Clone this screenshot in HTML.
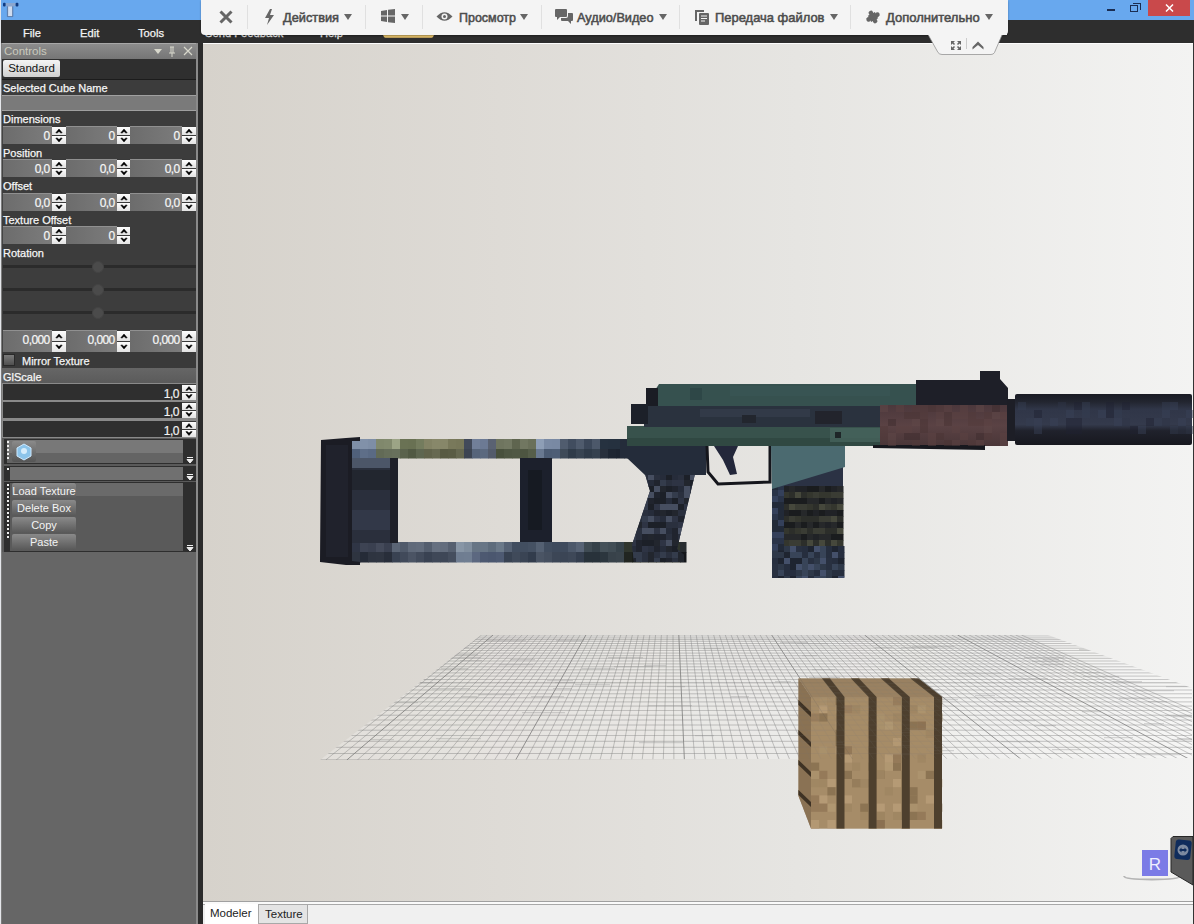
<!DOCTYPE html><html><head><meta charset="utf-8"><style>
*{margin:0;padding:0;box-sizing:border-box}
html,body{width:1194px;height:924px;overflow:hidden;background:#2d2d2d;font-family:"Liberation Sans",sans-serif}
div{position:absolute}
.mi{top:26px;color:#f4f4f4;font-size:11.2px;line-height:14px;-webkit-text-stroke:.25px #f4f4f4}
.lbl{left:2px;width:194px;background:#3c3c3c;color:#f6f6f6;font-size:11px;padding-left:1px;white-space:nowrap;-webkit-text-stroke:.25px #f6f6f6}
.fld{background:linear-gradient(90deg,#6c6c6c,#7c7c7c);border-top:1px solid #909090;color:#f6f6f6;font-size:12px;text-align:right;padding-right:2.4px;white-space:nowrap;-webkit-text-stroke:.2px #f6f6f6;letter-spacing:-.6px}
.spb{background:linear-gradient(#fdfdfd,#e2e2e2)}
.tb{font-size:13.4px;font-weight:normal;color:#4c4c4c;top:11px;line-height:14px;white-space:nowrap;-webkit-text-stroke:.55px #4c4c4c}
.sep{top:5px;width:1px;height:24px;background:#e0e0e0}
.tri{top:14px;width:0;height:0;border-left:4px solid transparent;border-right:4px solid transparent;border-top:6px solid #666}
</style></head><body>
<div style="left:0;top:0;width:1194px;height:20px;background:#68a8ee"></div>
<div style="left:0;top:20px;width:1194px;height:23px;background:#2e2e2e"></div>
<div class="mi" style="left:23px">File</div>
<div class="mi" style="left:80px">Edit</div>
<div class="mi" style="left:138px">Tools</div>
<div class="mi" style="left:205px">Send Feedback</div>
<div class="mi" style="left:320px">Help</div>
<svg style="position:absolute;left:2px;top:2px" width="18" height="16" viewBox="0 0 18 16"><path d="M1.3 1 L16.5 1 L16.5 4.2 L11 4.2 L11 14.8 L5.2 14.8 L5.2 4.2 L1.3 4.2Z" fill="#8aa6cf"/><rect x="6.2" y="4.5" width="3.8" height="9.6" fill="#cfdcef"/><rect x="1" y="0.8" width="2.6" height="3.6" rx="1" fill="#0d3a82"/><rect x="13.6" y="0.8" width="2.8" height="3.6" rx="1" fill="#0d3a82"/><path d="M5.4 4.4 L5.4 14.6 L10.8 14.6 L10.8 4.4" stroke="#4a6a9a" stroke-width=".7" fill="none"/></svg>
<div style="left:1107px;top:9px;width:8px;height:2px;background:#1a2d52"></div>
<div style="left:1133px;top:3px;width:8px;height:7px;border:1.5px solid #1a2d52;border-left:none;border-bottom:none"></div>
<div style="left:1130px;top:5px;width:8px;height:7px;border:1.5px solid #1a2d52"></div>
<div style="left:1148px;top:0;width:42px;height:16px;background:#c9494b"></div>
<svg style="position:absolute;left:1165px;top:4px" width="9" height="8"><path d="M1 0.5 L8 7.5 M8 0.5 L1 7.5" stroke="#fff" stroke-width="1.5"/></svg>
<div style="left:0;top:43px;width:198px;height:881px;background:#666"></div>
<div style="left:0;top:0;width:1px;height:924px;background:#e4e6ea"></div>
<div style="left:1px;top:43px;width:1px;height:881px;background:#7c7c7c"></div>
<div style="left:196px;top:43px;width:2px;height:881px;background:#8a8a8a"></div>
<div style="left:198px;top:43px;width:5px;height:881px;background:#2b2b2b"></div>
<div style="left:2px;top:43px;width:194px;height:16px;background:linear-gradient(#8c8c8c,#767676);border-top:1px solid #a8a8a8"></div>
<div style="left:4px;top:44px;color:#c9c9bd;font-size:11.5px;line-height:14px">Controls</div>
<svg style="position:absolute;left:150px;top:45px" width="46" height="13"><path d="M4 4 L12 4 L8 9Z" fill="#d8d8cc"/><path d="M20 2 L24 2 M21 2 L21 8 M23 2 L23 8 M19 8 L25 8 M22 8 L22 12" stroke="#d8d8cc" stroke-width="1" fill="none"/><path d="M34 2 L42 10 M42 2 L34 10" stroke="#d8d8cc" stroke-width="1.2"/></svg>
<div style="left:2px;top:59px;width:194px;height:21px;background:#2f2f2f;border-bottom:1px solid #1c1c1c"></div>
<div style="left:3px;top:60px;width:57px;height:17px;background:linear-gradient(#f4f4f4,#d0d0d0);border-radius:2px;color:#111;font-size:11.5px;line-height:17px;text-align:center">Standard</div>
<div class="lbl" style="top:80px;height:15px;line-height:16px;padding-top:0px;background:#3c3c3c">Selected Cube Name</div>
<div style="left:2px;top:95px;width:194px;height:16px;background:#7a7a7a;border-top:1px solid #a0a0a0;border-bottom:1px solid #a0a0a0"></div>
<div class="lbl" style="top:111px;height:15px;line-height:16px;padding-top:0px;background:#3c3c3c">Dimensions</div>
<div style="left:2px;top:126px;width:194px;height:18px;background:#444"></div>
<div class="fld" style="left:3px;top:126px;width:49px;height:18px;line-height:18px">0</div>
<div style="left:52px;top:126px;width:14px;height:18px;background:#3a3a3a"></div>
<div class="spb" style="left:52px;top:127px;width:14px;height:8px"></div>
<div class="spb" style="left:52px;top:136px;width:14px;height:8px"></div>
<svg style="position:absolute;left:52px;top:127px" width="14" height="8"><path d="M3.8 5.80 L7 2.00 L10.2 5.80 L8.9 6.10 L7 4.40 L5.1 6.10Z" fill="#000" stroke="#000" stroke-width=".5"/></svg>
<svg style="position:absolute;left:52px;top:136px" width="14" height="8"><path d="M3.8 2.20 L7 6.00 L10.2 2.20 L8.9 1.90 L7 3.60 L5.1 1.90Z" fill="#000" stroke="#000" stroke-width=".5"/></svg>
<div class="fld" style="left:66px;top:126px;width:51px;height:18px;line-height:18px">0</div>
<div style="left:117px;top:126px;width:14px;height:18px;background:#3a3a3a"></div>
<div class="spb" style="left:117px;top:127px;width:14px;height:8px"></div>
<div class="spb" style="left:117px;top:136px;width:14px;height:8px"></div>
<svg style="position:absolute;left:117px;top:127px" width="14" height="8"><path d="M3.8 5.80 L7 2.00 L10.2 5.80 L8.9 6.10 L7 4.40 L5.1 6.10Z" fill="#000" stroke="#000" stroke-width=".5"/></svg>
<svg style="position:absolute;left:117px;top:136px" width="14" height="8"><path d="M3.8 2.20 L7 6.00 L10.2 2.20 L8.9 1.90 L7 3.60 L5.1 1.90Z" fill="#000" stroke="#000" stroke-width=".5"/></svg>
<div class="fld" style="left:130px;top:126px;width:52px;height:18px;line-height:18px">0</div>
<div style="left:182px;top:126px;width:14px;height:18px;background:#3a3a3a"></div>
<div class="spb" style="left:182px;top:127px;width:14px;height:8px"></div>
<div class="spb" style="left:182px;top:136px;width:14px;height:8px"></div>
<svg style="position:absolute;left:182px;top:127px" width="14" height="8"><path d="M3.8 5.80 L7 2.00 L10.2 5.80 L8.9 6.10 L7 4.40 L5.1 6.10Z" fill="#000" stroke="#000" stroke-width=".5"/></svg>
<svg style="position:absolute;left:182px;top:136px" width="14" height="8"><path d="M3.8 2.20 L7 6.00 L10.2 2.20 L8.9 1.90 L7 3.60 L5.1 1.90Z" fill="#000" stroke="#000" stroke-width=".5"/></svg>
<div class="lbl" style="top:144px;height:15px;line-height:16px;padding-top:1px;background:#3c3c3c">Position</div>
<div style="left:2px;top:159px;width:194px;height:18px;background:#444"></div>
<div class="fld" style="left:3px;top:159px;width:49px;height:18px;line-height:18px">0,0</div>
<div style="left:52px;top:159px;width:14px;height:18px;background:#3a3a3a"></div>
<div class="spb" style="left:52px;top:160px;width:14px;height:8px"></div>
<div class="spb" style="left:52px;top:169px;width:14px;height:8px"></div>
<svg style="position:absolute;left:52px;top:160px" width="14" height="8"><path d="M3.8 5.80 L7 2.00 L10.2 5.80 L8.9 6.10 L7 4.40 L5.1 6.10Z" fill="#000" stroke="#000" stroke-width=".5"/></svg>
<svg style="position:absolute;left:52px;top:169px" width="14" height="8"><path d="M3.8 2.20 L7 6.00 L10.2 2.20 L8.9 1.90 L7 3.60 L5.1 1.90Z" fill="#000" stroke="#000" stroke-width=".5"/></svg>
<div class="fld" style="left:66px;top:159px;width:51px;height:18px;line-height:18px">0,0</div>
<div style="left:117px;top:159px;width:14px;height:18px;background:#3a3a3a"></div>
<div class="spb" style="left:117px;top:160px;width:14px;height:8px"></div>
<div class="spb" style="left:117px;top:169px;width:14px;height:8px"></div>
<svg style="position:absolute;left:117px;top:160px" width="14" height="8"><path d="M3.8 5.80 L7 2.00 L10.2 5.80 L8.9 6.10 L7 4.40 L5.1 6.10Z" fill="#000" stroke="#000" stroke-width=".5"/></svg>
<svg style="position:absolute;left:117px;top:169px" width="14" height="8"><path d="M3.8 2.20 L7 6.00 L10.2 2.20 L8.9 1.90 L7 3.60 L5.1 1.90Z" fill="#000" stroke="#000" stroke-width=".5"/></svg>
<div class="fld" style="left:130px;top:159px;width:52px;height:18px;line-height:18px">0,0</div>
<div style="left:182px;top:159px;width:14px;height:18px;background:#3a3a3a"></div>
<div class="spb" style="left:182px;top:160px;width:14px;height:8px"></div>
<div class="spb" style="left:182px;top:169px;width:14px;height:8px"></div>
<svg style="position:absolute;left:182px;top:160px" width="14" height="8"><path d="M3.8 5.80 L7 2.00 L10.2 5.80 L8.9 6.10 L7 4.40 L5.1 6.10Z" fill="#000" stroke="#000" stroke-width=".5"/></svg>
<svg style="position:absolute;left:182px;top:169px" width="14" height="8"><path d="M3.8 2.20 L7 6.00 L10.2 2.20 L8.9 1.90 L7 3.60 L5.1 1.90Z" fill="#000" stroke="#000" stroke-width=".5"/></svg>
<div class="lbl" style="top:177px;height:16px;line-height:17px;padding-top:1px;background:#3c3c3c">Offset</div>
<div style="left:2px;top:193px;width:194px;height:18px;background:#444"></div>
<div class="fld" style="left:3px;top:193px;width:49px;height:18px;line-height:18px">0,0</div>
<div style="left:52px;top:193px;width:14px;height:18px;background:#3a3a3a"></div>
<div class="spb" style="left:52px;top:194px;width:14px;height:8px"></div>
<div class="spb" style="left:52px;top:203px;width:14px;height:8px"></div>
<svg style="position:absolute;left:52px;top:194px" width="14" height="8"><path d="M3.8 5.80 L7 2.00 L10.2 5.80 L8.9 6.10 L7 4.40 L5.1 6.10Z" fill="#000" stroke="#000" stroke-width=".5"/></svg>
<svg style="position:absolute;left:52px;top:203px" width="14" height="8"><path d="M3.8 2.20 L7 6.00 L10.2 2.20 L8.9 1.90 L7 3.60 L5.1 1.90Z" fill="#000" stroke="#000" stroke-width=".5"/></svg>
<div class="fld" style="left:66px;top:193px;width:51px;height:18px;line-height:18px">0,0</div>
<div style="left:117px;top:193px;width:14px;height:18px;background:#3a3a3a"></div>
<div class="spb" style="left:117px;top:194px;width:14px;height:8px"></div>
<div class="spb" style="left:117px;top:203px;width:14px;height:8px"></div>
<svg style="position:absolute;left:117px;top:194px" width="14" height="8"><path d="M3.8 5.80 L7 2.00 L10.2 5.80 L8.9 6.10 L7 4.40 L5.1 6.10Z" fill="#000" stroke="#000" stroke-width=".5"/></svg>
<svg style="position:absolute;left:117px;top:203px" width="14" height="8"><path d="M3.8 2.20 L7 6.00 L10.2 2.20 L8.9 1.90 L7 3.60 L5.1 1.90Z" fill="#000" stroke="#000" stroke-width=".5"/></svg>
<div class="fld" style="left:130px;top:193px;width:52px;height:18px;line-height:18px">0,0</div>
<div style="left:182px;top:193px;width:14px;height:18px;background:#3a3a3a"></div>
<div class="spb" style="left:182px;top:194px;width:14px;height:8px"></div>
<div class="spb" style="left:182px;top:203px;width:14px;height:8px"></div>
<svg style="position:absolute;left:182px;top:194px" width="14" height="8"><path d="M3.8 5.80 L7 2.00 L10.2 5.80 L8.9 6.10 L7 4.40 L5.1 6.10Z" fill="#000" stroke="#000" stroke-width=".5"/></svg>
<svg style="position:absolute;left:182px;top:203px" width="14" height="8"><path d="M3.8 2.20 L7 6.00 L10.2 2.20 L8.9 1.90 L7 3.60 L5.1 1.90Z" fill="#000" stroke="#000" stroke-width=".5"/></svg>
<div class="lbl" style="top:211px;height:15px;line-height:16px;padding-top:1px;background:#3c3c3c">Texture Offset</div>
<div style="left:2px;top:226px;width:194px;height:18px;background:#3c3c3c"></div>
<div style="left:2px;top:226px;width:194px;height:18px;background:#444"></div>
<div class="fld" style="left:3px;top:226px;width:49px;height:18px;line-height:18px">0</div>
<div style="left:52px;top:226px;width:14px;height:18px;background:#3a3a3a"></div>
<div class="spb" style="left:52px;top:227px;width:14px;height:8px"></div>
<div class="spb" style="left:52px;top:236px;width:14px;height:8px"></div>
<svg style="position:absolute;left:52px;top:227px" width="14" height="8"><path d="M3.8 5.80 L7 2.00 L10.2 5.80 L8.9 6.10 L7 4.40 L5.1 6.10Z" fill="#000" stroke="#000" stroke-width=".5"/></svg>
<svg style="position:absolute;left:52px;top:236px" width="14" height="8"><path d="M3.8 2.20 L7 6.00 L10.2 2.20 L8.9 1.90 L7 3.60 L5.1 1.90Z" fill="#000" stroke="#000" stroke-width=".5"/></svg>
<div class="fld" style="left:66px;top:226px;width:51px;height:18px;line-height:18px">0</div>
<div style="left:117px;top:226px;width:14px;height:18px;background:#3a3a3a"></div>
<div class="spb" style="left:117px;top:227px;width:14px;height:8px"></div>
<div class="spb" style="left:117px;top:236px;width:14px;height:8px"></div>
<svg style="position:absolute;left:117px;top:227px" width="14" height="8"><path d="M3.8 5.80 L7 2.00 L10.2 5.80 L8.9 6.10 L7 4.40 L5.1 6.10Z" fill="#000" stroke="#000" stroke-width=".5"/></svg>
<svg style="position:absolute;left:117px;top:236px" width="14" height="8"><path d="M3.8 2.20 L7 6.00 L10.2 2.20 L8.9 1.90 L7 3.60 L5.1 1.90Z" fill="#000" stroke="#000" stroke-width=".5"/></svg>
<div style="left:130px;top:226px;width:66px;height:18px;background:#3c3c3c"></div>
<div class="lbl" style="top:244px;height:16px;line-height:17px;padding-top:1px;background:#3c3c3c">Rotation</div>
<div style="left:2px;top:260px;width:194px;height:70px;background:#3d3d3d"></div>
<div style="left:3px;top:265px;width:193px;height:3px;background:#2b2b2b"></div>
<div style="left:92px;top:261px;width:12px;height:12px;border-radius:50%;background:#4b4b4b;border:1px solid #444"></div>
<div style="left:3px;top:288px;width:193px;height:3px;background:#2b2b2b"></div>
<div style="left:92px;top:284px;width:12px;height:12px;border-radius:50%;background:#4b4b4b;border:1px solid #444"></div>
<div style="left:3px;top:311px;width:193px;height:3px;background:#2b2b2b"></div>
<div style="left:92px;top:307px;width:12px;height:12px;border-radius:50%;background:#4b4b4b;border:1px solid #444"></div>
<div style="left:2px;top:330px;width:194px;height:22px;background:#444"></div>
<div class="fld" style="left:3px;top:330px;width:49px;height:22px;line-height:19px">0,000</div>
<div style="left:52px;top:330px;width:14px;height:22px;background:#3a3a3a"></div>
<div class="spb" style="left:52px;top:331px;width:14px;height:10px"></div>
<div class="spb" style="left:52px;top:342px;width:14px;height:10px"></div>
<svg style="position:absolute;left:52px;top:331px" width="14" height="10"><path d="M3.8 6.80 L7 3.00 L10.2 6.80 L8.9 7.10 L7 5.40 L5.1 7.10Z" fill="#000" stroke="#000" stroke-width=".5"/></svg>
<svg style="position:absolute;left:52px;top:342px" width="14" height="10"><path d="M3.8 3.20 L7 7.00 L10.2 3.20 L8.9 2.90 L7 4.60 L5.1 2.90Z" fill="#000" stroke="#000" stroke-width=".5"/></svg>
<div class="fld" style="left:66px;top:330px;width:51px;height:22px;line-height:19px">0,000</div>
<div style="left:117px;top:330px;width:14px;height:22px;background:#3a3a3a"></div>
<div class="spb" style="left:117px;top:331px;width:14px;height:10px"></div>
<div class="spb" style="left:117px;top:342px;width:14px;height:10px"></div>
<svg style="position:absolute;left:117px;top:331px" width="14" height="10"><path d="M3.8 6.80 L7 3.00 L10.2 6.80 L8.9 7.10 L7 5.40 L5.1 7.10Z" fill="#000" stroke="#000" stroke-width=".5"/></svg>
<svg style="position:absolute;left:117px;top:342px" width="14" height="10"><path d="M3.8 3.20 L7 7.00 L10.2 3.20 L8.9 2.90 L7 4.60 L5.1 2.90Z" fill="#000" stroke="#000" stroke-width=".5"/></svg>
<div class="fld" style="left:130px;top:330px;width:52px;height:22px;line-height:19px">0,000</div>
<div style="left:182px;top:330px;width:14px;height:22px;background:#3a3a3a"></div>
<div class="spb" style="left:182px;top:331px;width:14px;height:10px"></div>
<div class="spb" style="left:182px;top:342px;width:14px;height:10px"></div>
<svg style="position:absolute;left:182px;top:331px" width="14" height="10"><path d="M3.8 6.80 L7 3.00 L10.2 6.80 L8.9 7.10 L7 5.40 L5.1 7.10Z" fill="#000" stroke="#000" stroke-width=".5"/></svg>
<svg style="position:absolute;left:182px;top:342px" width="14" height="10"><path d="M3.8 3.20 L7 7.00 L10.2 3.20 L8.9 2.90 L7 4.60 L5.1 2.90Z" fill="#000" stroke="#000" stroke-width=".5"/></svg>
<div style="left:2px;top:352px;width:194px;height:16px;background:#3a3a3a"></div>
<div style="left:3px;top:354px;width:12px;height:12px;background:linear-gradient(#7a7a7a,#505050);border:1px solid #2a2a2a"></div>
<div style="left:22px;top:354px;color:#f4f4f4;font-size:11px;line-height:15px;-webkit-text-stroke:.25px #f4f4f4">Mirror Texture</div>
<div class="lbl" style="top:368px;height:16px;line-height:17px;padding-top:1px;background:linear-gradient(#666,#5a5a5a)">GlScale</div>
<div style="left:2px;top:383px;width:194px;height:56px;background:#8a8a8a"></div>
<div style="left:3px;top:384px;width:179px;height:16px;background:#2f2f2f;color:#f2f2f2;font-size:12px;line-height:21px;text-align:right;padding-right:3px;letter-spacing:-.5px;-webkit-text-stroke:.2px #f2f2f2;overflow:hidden">1,0</div>
<div style="left:182px;top:384px;width:14px;height:16px;background:#3a3a3a"></div>
<div class="spb" style="left:182px;top:385px;width:14px;height:7px"></div>
<div class="spb" style="left:182px;top:393px;width:14px;height:7px"></div>
<svg style="position:absolute;left:182px;top:385px" width="14" height="7"><path d="M3.8 5.30 L7 1.50 L10.2 5.30 L8.9 5.60 L7 3.90 L5.1 5.60Z" fill="#000" stroke="#000" stroke-width=".5"/></svg>
<svg style="position:absolute;left:182px;top:393px" width="14" height="7"><path d="M3.8 1.70 L7 5.50 L10.2 1.70 L8.9 1.40 L7 3.10 L5.1 1.40Z" fill="#000" stroke="#000" stroke-width=".5"/></svg>
<div style="left:3px;top:402px;width:179px;height:16px;background:#2f2f2f;color:#f2f2f2;font-size:12px;line-height:21px;text-align:right;padding-right:3px;letter-spacing:-.5px;-webkit-text-stroke:.2px #f2f2f2;overflow:hidden">1,0</div>
<div style="left:182px;top:402px;width:14px;height:16px;background:#3a3a3a"></div>
<div class="spb" style="left:182px;top:403px;width:14px;height:7px"></div>
<div class="spb" style="left:182px;top:411px;width:14px;height:7px"></div>
<svg style="position:absolute;left:182px;top:403px" width="14" height="7"><path d="M3.8 5.30 L7 1.50 L10.2 5.30 L8.9 5.60 L7 3.90 L5.1 5.60Z" fill="#000" stroke="#000" stroke-width=".5"/></svg>
<svg style="position:absolute;left:182px;top:411px" width="14" height="7"><path d="M3.8 1.70 L7 5.50 L10.2 1.70 L8.9 1.40 L7 3.10 L5.1 1.40Z" fill="#000" stroke="#000" stroke-width=".5"/></svg>
<div style="left:3px;top:421px;width:179px;height:16px;background:#2f2f2f;color:#f2f2f2;font-size:12px;line-height:21px;text-align:right;padding-right:3px;letter-spacing:-.5px;-webkit-text-stroke:.2px #f2f2f2;overflow:hidden">1,0</div>
<div style="left:182px;top:421px;width:14px;height:16px;background:#3a3a3a"></div>
<div class="spb" style="left:182px;top:422px;width:14px;height:7px"></div>
<div class="spb" style="left:182px;top:430px;width:14px;height:7px"></div>
<svg style="position:absolute;left:182px;top:422px" width="14" height="7"><path d="M3.8 5.30 L7 1.50 L10.2 5.30 L8.9 5.60 L7 3.90 L5.1 5.60Z" fill="#000" stroke="#000" stroke-width=".5"/></svg>
<svg style="position:absolute;left:182px;top:430px" width="14" height="7"><path d="M3.8 1.70 L7 5.50 L10.2 1.70 L8.9 1.40 L7 3.10 L5.1 1.40Z" fill="#000" stroke="#000" stroke-width=".5"/></svg>
<div style="left:2px;top:438px;width:194px;height:114px;background:#5a5a5a"></div>
<div style="left:4px;top:439px;width:192px;height:25px;background:#2e2e2e"></div>
<div style="left:7px;top:440px;width:176px;height:23px;background:linear-gradient(#787878 0,#787878 55%,#646464 55%,#646464)"></div>
<div style="left:12px;top:441px;width:24px;height:21px;background:linear-gradient(#8a8a8a,#555);border-radius:2px"></div>
<svg style="position:absolute;left:14px;top:442px" width="20" height="20"><path d="M10 2 L17 6 L17 14 L10 18 L3 14 L3 6Z" fill="#8cc4ea" stroke="#cfeaff" stroke-width="1"/><circle cx="10" cy="9" r="3" fill="#e8f6ff" opacity=".8"/></svg>
<div style="left:4px;top:466px;width:192px;height:15px;background:#2e2e2e"></div>
<div style="left:10px;top:467px;width:173px;height:13px;background:#707070"></div>
<div style="left:4px;top:482px;width:192px;height:70px;background:#2e2e2e"></div>
<div style="left:10px;top:483px;width:173px;height:68px;background:#5a5a5a"></div>
<div style="left:76px;top:483px;width:107px;height:13px;background:#6a6a6a"></div>
<div style="left:12px;top:483px;width:64px;height:16px;background:linear-gradient(#8a8a8a,#585858);border-radius:2px;color:#f4f4f4;font-size:11px;line-height:16px;text-align:center;white-space:nowrap;overflow:hidden">Load Texture</div>
<div style="left:12px;top:500px;width:64px;height:16px;background:linear-gradient(#8a8a8a,#585858);border-radius:2px;color:#f4f4f4;font-size:11px;line-height:16px;text-align:center;white-space:nowrap;overflow:hidden">Delete Box</div>
<div style="left:12px;top:517px;width:64px;height:16px;background:linear-gradient(#8a8a8a,#585858);border-radius:2px;color:#f4f4f4;font-size:11px;line-height:16px;text-align:center;white-space:nowrap;overflow:hidden">Copy</div>
<div style="left:12px;top:534px;width:64px;height:16px;background:linear-gradient(#8a8a8a,#585858);border-radius:2px;color:#f4f4f4;font-size:11px;line-height:16px;text-align:center;white-space:nowrap;overflow:hidden">Paste</div>
<div style="left:7px;top:441px;width:2px;height:2px;background:#eee"></div>
<div style="left:7px;top:445px;width:2px;height:2px;background:#eee"></div>
<div style="left:7px;top:449px;width:2px;height:2px;background:#eee"></div>
<div style="left:7px;top:453px;width:2px;height:2px;background:#eee"></div>
<div style="left:7px;top:457px;width:2px;height:2px;background:#eee"></div>
<div style="left:7px;top:468px;width:2px;height:2px;background:#eee"></div>
<div style="left:7px;top:484px;width:2px;height:2px;background:#eee"></div>
<div style="left:7px;top:488px;width:2px;height:2px;background:#eee"></div>
<div style="left:7px;top:492px;width:2px;height:2px;background:#eee"></div>
<div style="left:7px;top:496px;width:2px;height:2px;background:#eee"></div>
<div style="left:7px;top:500px;width:2px;height:2px;background:#eee"></div>
<div style="left:7px;top:504px;width:2px;height:2px;background:#eee"></div>
<div style="left:7px;top:508px;width:2px;height:2px;background:#eee"></div>
<div style="left:7px;top:512px;width:2px;height:2px;background:#eee"></div>
<div style="left:7px;top:516px;width:2px;height:2px;background:#eee"></div>
<div style="left:7px;top:520px;width:2px;height:2px;background:#eee"></div>
<div style="left:7px;top:524px;width:2px;height:2px;background:#eee"></div>
<div style="left:7px;top:528px;width:2px;height:2px;background:#eee"></div>
<div style="left:7px;top:532px;width:2px;height:2px;background:#eee"></div>
<div style="left:7px;top:536px;width:2px;height:2px;background:#eee"></div>
<svg style="position:absolute;left:186px;top:457px" width="8" height="7"><path d="M1 0.5 L7 0.5 M1 2.5 L4 6 L7 2.5Z" stroke="#eee" fill="#eee" stroke-width="1"/></svg>
<svg style="position:absolute;left:186px;top:474px" width="8" height="7"><path d="M1 0.5 L7 0.5 M1 2.5 L4 6 L7 2.5Z" stroke="#eee" fill="#eee" stroke-width="1"/></svg>
<svg style="position:absolute;left:186px;top:545px" width="8" height="7"><path d="M1 0.5 L7 0.5 M1 2.5 L4 6 L7 2.5Z" stroke="#eee" fill="#eee" stroke-width="1"/></svg>
<div style="left:203px;top:43px;width:990px;height:858px;background:linear-gradient(90deg,#d6d2cb 0%,#dedbd6 30%,#e6e5e2 60%,#f3f3f2 100%)"></div>
<div style="left:1193px;top:43px;width:1px;height:881px;background:#333"></div>
<div style="left:203px;top:901px;width:990px;height:23px;background:#f0f0f0;border-top:1px solid #a0a0a0"></div>
<div style="left:203px;top:902px;width:990px;height:2px;background:#fafafa"></div>
<div style="left:203px;top:904px;width:990px;height:1px;background:#a8a8a8"></div>
<div style="left:203px;top:43px;width:990px;height:1px;background:#fdfdfd"></div>
<div style="left:205px;top:904px;width:53px;height:20px;background:#fff;color:#222;font-size:11.5px;line-height:19px;padding-left:5px">Modeler</div>
<div style="left:258px;top:904px;width:50px;height:20px;background:#e4e4e4;border:1px solid #a8a8a8;color:#222;font-size:11.5px;line-height:18px;padding-left:6px">Texture</div>
<svg style="position:absolute;left:0;top:0" width="1194" height="924" viewBox="0 0 1194 924">
<defs>
<clipPath id="gc"><polygon points="481,635 1048,635 1192,688 1192,758 320,760"/></clipPath>
<clipPath id="vp"><rect x="203" y="43" width="990" height="858"/></clipPath>
<linearGradient id="topbar" x1="0" x2="1" y1="0" y2="0"><stop offset="0" stop-color="#8c98aa"/><stop offset=".12" stop-color="#7e8670"/><stop offset=".25" stop-color="#8c8c66"/><stop offset=".38" stop-color="#646a74"/><stop offset=".5" stop-color="#7c8068"/><stop offset=".62" stop-color="#8a96a6"/><stop offset=".75" stop-color="#4a5262"/><stop offset="1" stop-color="#2c3440"/></linearGradient>
<linearGradient id="botbar" x1="0" x2="1" y1="0" y2="0"><stop offset="0" stop-color="#5a6272"/><stop offset=".2" stop-color="#4a5264"/><stop offset=".45" stop-color="#5e6878"/><stop offset=".7" stop-color="#3e4656"/><stop offset=".9" stop-color="#2e3430"/><stop offset="1" stop-color="#2a3038"/></linearGradient>
<linearGradient id="supp" x1="0" x2="0" y1="0" y2="1"><stop offset="0" stop-color="#1a1b24"/><stop offset=".15" stop-color="#22252f"/><stop offset=".3" stop-color="#303648"/><stop offset=".6" stop-color="#343a4c"/><stop offset=".72" stop-color="#20222c"/><stop offset="1" stop-color="#17181f"/></linearGradient>
<linearGradient id="hg" x1="0" x2="0" y1="0" y2="1"><stop offset="0" stop-color="#4c383c"/><stop offset=".5" stop-color="#5a4244"/><stop offset="1" stop-color="#4a3638"/></linearGradient>
</defs>
<clipPath id="gripc"><polygon points="645,474 695,474 677,549 684,555 684,562 634,562 632,545 650,491"/></clipPath>
<g clip-path="url(#vp)"><rect x="352" y="439" width="8.5" height="10.5" fill="#7e8ea6"/><rect x="360" y="439" width="8.5" height="10.5" fill="#8191a9"/><rect x="368" y="439" width="8.5" height="10.5" fill="#7e8ea6"/><rect x="376" y="439" width="8.5" height="10.5" fill="#80886c"/><rect x="384" y="439" width="8.5" height="10.5" fill="#828a6e"/><rect x="392" y="439" width="8.5" height="10.5" fill="#9ca486"/><rect x="400" y="439" width="8.5" height="10.5" fill="#6a7254"/><rect x="408" y="439" width="8.5" height="10.5" fill="#697153"/><rect x="416" y="439" width="8.5" height="10.5" fill="#747c5e"/><rect x="424" y="439" width="8.5" height="10.5" fill="#838365"/><rect x="432" y="439" width="8.5" height="10.5" fill="#88886a"/><rect x="440" y="439" width="8.5" height="10.5" fill="#878769"/><rect x="448" y="439" width="8.5" height="10.5" fill="#79795b"/><rect x="456" y="439" width="8.5" height="10.5" fill="#777759"/><rect x="464" y="439" width="8.5" height="10.5" fill="#424a5a"/><rect x="472" y="439" width="8.5" height="10.5" fill="#717f99"/><rect x="480" y="439" width="8.5" height="10.5" fill="#6c7a94"/><rect x="488" y="439" width="8.5" height="10.5" fill="#5a6272"/><rect x="496" y="439" width="8.5" height="10.5" fill="#6f755f"/><rect x="504" y="439" width="8.5" height="10.5" fill="#727862"/><rect x="512" y="439" width="8.5" height="10.5" fill="#5f654f"/><rect x="520" y="439" width="8.5" height="10.5" fill="#717761"/><rect x="528" y="439" width="8.5" height="10.5" fill="#6a705a"/><rect x="536" y="439" width="8.5" height="10.5" fill="#8e9eb6"/><rect x="544" y="439" width="8.5" height="10.5" fill="#7a8aa4"/><rect x="552" y="439" width="8.5" height="10.5" fill="#7989a3"/><rect x="560" y="439" width="8.5" height="10.5" fill="#505c6e"/><rect x="568" y="439" width="8.5" height="10.5" fill="#414d5f"/><rect x="576" y="439" width="8.5" height="10.5" fill="#4f5b6d"/><rect x="584" y="439" width="8.5" height="10.5" fill="#3c485a"/><rect x="592" y="439" width="8.5" height="10.5" fill="#4c586a"/><rect x="600" y="439" width="8.5" height="10.5" fill="#263240"/><rect x="608" y="439" width="8.5" height="10.5" fill="#25313f"/><rect x="616" y="439" width="8.5" height="10.5" fill="#25313f"/><rect x="624" y="439" width="8.5" height="10.5" fill="#2a3644"/><rect x="632" y="439" width="8.5" height="10.5" fill="#2b3745"/><rect x="640" y="439" width="2.5" height="10.5" fill="#374351"/><rect x="352" y="449" width="8.5" height="9.5" fill="#50607a"/><rect x="360" y="449" width="8.5" height="9.5" fill="#5e6e88"/><rect x="368" y="449" width="8.5" height="9.5" fill="#5a6a84"/><rect x="376" y="449" width="8.5" height="9.5" fill="#626a56"/><rect x="384" y="449" width="8.5" height="9.5" fill="#666e5a"/><rect x="392" y="449" width="8.5" height="9.5" fill="#68705c"/><rect x="400" y="449" width="8.5" height="9.5" fill="#5a624c"/><rect x="408" y="449" width="8.5" height="9.5" fill="#515943"/><rect x="416" y="449" width="8.5" height="9.5" fill="#5e6650"/><rect x="424" y="449" width="8.5" height="9.5" fill="#61634b"/><rect x="432" y="449" width="8.5" height="9.5" fill="#676951"/><rect x="440" y="449" width="8.5" height="9.5" fill="#585a42"/><rect x="448" y="449" width="8.5" height="9.5" fill="#5a5c44"/><rect x="456" y="449" width="8.5" height="9.5" fill="#666850"/><rect x="464" y="449" width="8.5" height="9.5" fill="#3c4452"/><rect x="472" y="449" width="8.5" height="9.5" fill="#56647a"/><rect x="480" y="449" width="8.5" height="9.5" fill="#5b697f"/><rect x="488" y="449" width="8.5" height="9.5" fill="#535b6b"/><rect x="496" y="449" width="8.5" height="9.5" fill="#48503c"/><rect x="504" y="449" width="8.5" height="9.5" fill="#4e5642"/><rect x="512" y="449" width="8.5" height="9.5" fill="#505844"/><rect x="520" y="449" width="8.5" height="9.5" fill="#4d5541"/><rect x="528" y="449" width="8.5" height="9.5" fill="#565e4a"/><rect x="536" y="449" width="8.5" height="9.5" fill="#697991"/><rect x="544" y="449" width="8.5" height="9.5" fill="#4c5c74"/><rect x="552" y="449" width="8.5" height="9.5" fill="#4e5e76"/><rect x="560" y="449" width="8.5" height="9.5" fill="#3e4a58"/><rect x="568" y="449" width="8.5" height="9.5" fill="#2f3b49"/><rect x="576" y="449" width="8.5" height="9.5" fill="#384452"/><rect x="584" y="449" width="8.5" height="9.5" fill="#2f3b49"/><rect x="592" y="449" width="8.5" height="9.5" fill="#35414f"/><rect x="600" y="449" width="8.5" height="9.5" fill="#28303c"/><rect x="608" y="449" width="8.5" height="9.5" fill="#1e2632"/><rect x="616" y="449" width="8.5" height="9.5" fill="#1c2430"/><rect x="624" y="449" width="8.5" height="9.5" fill="#1c2430"/><rect x="632" y="449" width="8.5" height="9.5" fill="#222a36"/><rect x="640" y="449" width="2.5" height="9.5" fill="#222a36"/><rect x="352" y="542" width="8.5" height="10.5" fill="#2f3545"/><rect x="360" y="542" width="8.5" height="10.5" fill="#3d4353"/><rect x="368" y="542" width="8.5" height="10.5" fill="#3a4050"/><rect x="376" y="542" width="8.5" height="10.5" fill="#444a5a"/><rect x="384" y="542" width="8.5" height="10.5" fill="#3a4050"/><rect x="392" y="542" width="8.5" height="10.5" fill="#5b6575"/><rect x="400" y="542" width="8.5" height="10.5" fill="#505a6a"/><rect x="408" y="542" width="8.5" height="10.5" fill="#606a7a"/><rect x="416" y="542" width="8.5" height="10.5" fill="#626c7c"/><rect x="424" y="542" width="8.5" height="10.5" fill="#545e6e"/><rect x="432" y="542" width="8.5" height="10.5" fill="#667080"/><rect x="440" y="542" width="8.5" height="10.5" fill="#636d7d"/><rect x="448" y="542" width="8.5" height="10.5" fill="#566070"/><rect x="456" y="542" width="8.5" height="10.5" fill="#8896a6"/><rect x="464" y="542" width="8.5" height="10.5" fill="#808e9e"/><rect x="472" y="542" width="8.5" height="10.5" fill="#677585"/><rect x="480" y="542" width="8.5" height="10.5" fill="#687686"/><rect x="488" y="542" width="8.5" height="10.5" fill="#5e6c7c"/><rect x="496" y="542" width="8.5" height="10.5" fill="#6b7989"/><rect x="504" y="542" width="8.5" height="10.5" fill="#566274"/><rect x="512" y="542" width="8.5" height="10.5" fill="#414d5f"/><rect x="520" y="542" width="8.5" height="10.5" fill="#424e60"/><rect x="528" y="542" width="8.5" height="10.5" fill="#455163"/><rect x="536" y="542" width="8.5" height="10.5" fill="#546072"/><rect x="544" y="542" width="8.5" height="10.5" fill="#414d5f"/><rect x="552" y="542" width="8.5" height="10.5" fill="#3e4a5c"/><rect x="560" y="542" width="8.5" height="10.5" fill="#3f4b5d"/><rect x="568" y="542" width="8.5" height="10.5" fill="#4c586a"/><rect x="576" y="542" width="8.5" height="10.5" fill="#576375"/><rect x="584" y="542" width="8.5" height="10.5" fill="#3f4b53"/><rect x="592" y="542" width="8.5" height="10.5" fill="#354149"/><rect x="600" y="542" width="8.5" height="10.5" fill="#455159"/><rect x="608" y="542" width="8.5" height="10.5" fill="#414d55"/><rect x="616" y="542" width="8.5" height="10.5" fill="#36424a"/><rect x="624" y="542" width="8.5" height="10.5" fill="#30362e"/><rect x="632" y="542" width="8.5" height="10.5" fill="#323830"/><rect x="640" y="542" width="8.5" height="10.5" fill="#282e26"/><rect x="648" y="542" width="8.5" height="10.5" fill="#393f37"/><rect x="656" y="542" width="8.5" height="10.5" fill="#3a4038"/><rect x="664" y="542" width="8.5" height="10.5" fill="#262c24"/><rect x="672" y="542" width="8.5" height="10.5" fill="#2f352d"/><rect x="680" y="542" width="6.5" height="10.5" fill="#282c30"/><rect x="352" y="552" width="8.5" height="10.5" fill="#2e3440"/><rect x="360" y="552" width="8.5" height="10.5" fill="#252b37"/><rect x="368" y="552" width="8.5" height="10.5" fill="#2e3440"/><rect x="376" y="552" width="8.5" height="10.5" fill="#2f3541"/><rect x="384" y="552" width="8.5" height="10.5" fill="#282e3a"/><rect x="392" y="552" width="8.5" height="10.5" fill="#394252"/><rect x="400" y="552" width="8.5" height="10.5" fill="#414a5a"/><rect x="408" y="552" width="8.5" height="10.5" fill="#4b5464"/><rect x="416" y="552" width="8.5" height="10.5" fill="#424b5b"/><rect x="424" y="552" width="8.5" height="10.5" fill="#394252"/><rect x="432" y="552" width="8.5" height="10.5" fill="#3f4858"/><rect x="440" y="552" width="8.5" height="10.5" fill="#3e4757"/><rect x="448" y="552" width="8.5" height="10.5" fill="#454e5e"/><rect x="456" y="552" width="8.5" height="10.5" fill="#6f7d91"/><rect x="464" y="552" width="8.5" height="10.5" fill="#707e92"/><rect x="472" y="552" width="8.5" height="10.5" fill="#5c6880"/><rect x="480" y="552" width="8.5" height="10.5" fill="#4d5971"/><rect x="488" y="552" width="8.5" height="10.5" fill="#4b576f"/><rect x="496" y="552" width="8.5" height="10.5" fill="#4e5a72"/><rect x="504" y="552" width="8.5" height="10.5" fill="#384252"/><rect x="512" y="552" width="8.5" height="10.5" fill="#404a5a"/><rect x="520" y="552" width="8.5" height="10.5" fill="#3a4454"/><rect x="528" y="552" width="8.5" height="10.5" fill="#323c4c"/><rect x="536" y="552" width="8.5" height="10.5" fill="#4a5464"/><rect x="544" y="552" width="8.5" height="10.5" fill="#454f5f"/><rect x="552" y="552" width="8.5" height="10.5" fill="#3c4656"/><rect x="560" y="552" width="8.5" height="10.5" fill="#3b4555"/><rect x="568" y="552" width="8.5" height="10.5" fill="#3e4858"/><rect x="576" y="552" width="8.5" height="10.5" fill="#343e4e"/><rect x="584" y="552" width="8.5" height="10.5" fill="#28323a"/><rect x="592" y="552" width="8.5" height="10.5" fill="#28323a"/><rect x="600" y="552" width="8.5" height="10.5" fill="#2c363e"/><rect x="608" y="552" width="8.5" height="10.5" fill="#38424a"/><rect x="616" y="552" width="8.5" height="10.5" fill="#3a444c"/><rect x="624" y="552" width="8.5" height="10.5" fill="#212521"/><rect x="632" y="552" width="8.5" height="10.5" fill="#1a1e1a"/><rect x="640" y="552" width="8.5" height="10.5" fill="#2d312d"/><rect x="648" y="552" width="8.5" height="10.5" fill="#252925"/><rect x="656" y="552" width="8.5" height="10.5" fill="#252925"/><rect x="664" y="552" width="8.5" height="10.5" fill="#2d312d"/><rect x="672" y="552" width="8.5" height="10.5" fill="#282c28"/><rect x="680" y="552" width="6.5" height="10.5" fill="#14161a"/><rect x="352" y="458" width="46" height="85" fill="#2a2f3c"/><rect x="352" y="458" width="46" height="10" fill="#4c5668"/><rect x="352" y="470" width="46" height="20" fill="#22262f"/><rect x="352" y="510" width="46" height="20" fill="#323848"/><rect x="390" y="458" width="8" height="85" fill="#1e2028"/><rect x="520" y="458" width="32" height="84" fill="#1c202c"/><rect x="528" y="470" width="14" height="60" fill="#161a22"/><polygon points="321,440 346,438 360,437 360,441 352,441 352,561 360,562 360,565 346,565 320,562" fill="#1b1c24"/><rect x="326" y="445" width="22" height="112" fill="#20222c"/><polygon points="645,474 695,474 677,549 684,555 684,562 634,562 632,545 650,491" fill="#2c3244"/><g clip-path="url(#gripc)"><rect x="630" y="474" width="6.5" height="6.5" fill="#464e60"/><rect x="630" y="480" width="6.5" height="6.5" fill="#1c2028"/><rect x="630" y="486" width="6.5" height="6.5" fill="#20242e"/><rect x="630" y="492" width="6.5" height="6.5" fill="#22262e"/><rect x="630" y="498" width="6.5" height="6.5" fill="#343c4c"/><rect x="630" y="504" width="6.5" height="6.5" fill="#20242e"/><rect x="630" y="510" width="6.5" height="6.5" fill="#2a303e"/><rect x="630" y="516" width="6.5" height="6.5" fill="#262c3a"/><rect x="630" y="522" width="6.5" height="6.5" fill="#1c2028"/><rect x="630" y="528" width="6.5" height="6.5" fill="#22262e"/><rect x="630" y="534" width="6.5" height="6.5" fill="#343c4c"/><rect x="630" y="540" width="6.5" height="6.5" fill="#2e3444"/><rect x="630" y="546" width="6.5" height="6.5" fill="#262c3a"/><rect x="630" y="552" width="6.5" height="6.5" fill="#343c4c"/><rect x="630" y="558" width="6.5" height="6.5" fill="#20242e"/><rect x="636" y="474" width="6.5" height="6.5" fill="#343c4c"/><rect x="636" y="480" width="6.5" height="6.5" fill="#2e3444"/><rect x="636" y="486" width="6.5" height="6.5" fill="#464e60"/><rect x="636" y="492" width="6.5" height="6.5" fill="#2a303e"/><rect x="636" y="498" width="6.5" height="6.5" fill="#2e3444"/><rect x="636" y="504" width="6.5" height="6.5" fill="#2a303e"/><rect x="636" y="510" width="6.5" height="6.5" fill="#262c3a"/><rect x="636" y="516" width="6.5" height="6.5" fill="#2a303e"/><rect x="636" y="522" width="6.5" height="6.5" fill="#22262e"/><rect x="636" y="528" width="6.5" height="6.5" fill="#2a303e"/><rect x="636" y="534" width="6.5" height="6.5" fill="#2a303e"/><rect x="636" y="540" width="6.5" height="6.5" fill="#20242e"/><rect x="636" y="546" width="6.5" height="6.5" fill="#20242e"/><rect x="636" y="552" width="6.5" height="6.5" fill="#343c4c"/><rect x="636" y="558" width="6.5" height="6.5" fill="#343c4c"/><rect x="642" y="474" width="6.5" height="6.5" fill="#2a303e"/><rect x="642" y="480" width="6.5" height="6.5" fill="#2a303e"/><rect x="642" y="486" width="6.5" height="6.5" fill="#464e60"/><rect x="642" y="492" width="6.5" height="6.5" fill="#1c2028"/><rect x="642" y="498" width="6.5" height="6.5" fill="#343c4c"/><rect x="642" y="504" width="6.5" height="6.5" fill="#343c4c"/><rect x="642" y="510" width="6.5" height="6.5" fill="#2a303e"/><rect x="642" y="516" width="6.5" height="6.5" fill="#343c4c"/><rect x="642" y="522" width="6.5" height="6.5" fill="#2e3444"/><rect x="642" y="528" width="6.5" height="6.5" fill="#464e60"/><rect x="642" y="534" width="6.5" height="6.5" fill="#20242e"/><rect x="642" y="540" width="6.5" height="6.5" fill="#1c2028"/><rect x="642" y="546" width="6.5" height="6.5" fill="#2e3444"/><rect x="642" y="552" width="6.5" height="6.5" fill="#2a303e"/><rect x="642" y="558" width="6.5" height="6.5" fill="#2a303e"/><rect x="648" y="474" width="6.5" height="6.5" fill="#464e60"/><rect x="648" y="480" width="6.5" height="6.5" fill="#262c3a"/><rect x="648" y="486" width="6.5" height="6.5" fill="#1c2028"/><rect x="648" y="492" width="6.5" height="6.5" fill="#464e60"/><rect x="648" y="498" width="6.5" height="6.5" fill="#20242e"/><rect x="648" y="504" width="6.5" height="6.5" fill="#1c2028"/><rect x="648" y="510" width="6.5" height="6.5" fill="#262c3a"/><rect x="648" y="516" width="6.5" height="6.5" fill="#464e60"/><rect x="648" y="522" width="6.5" height="6.5" fill="#1c2028"/><rect x="648" y="528" width="6.5" height="6.5" fill="#464e60"/><rect x="648" y="534" width="6.5" height="6.5" fill="#22262e"/><rect x="648" y="540" width="6.5" height="6.5" fill="#1c2028"/><rect x="648" y="546" width="6.5" height="6.5" fill="#2a303e"/><rect x="648" y="552" width="6.5" height="6.5" fill="#22262e"/><rect x="648" y="558" width="6.5" height="6.5" fill="#22262e"/><rect x="654" y="474" width="6.5" height="6.5" fill="#2a303e"/><rect x="654" y="480" width="6.5" height="6.5" fill="#20242e"/><rect x="654" y="486" width="6.5" height="6.5" fill="#464e60"/><rect x="654" y="492" width="6.5" height="6.5" fill="#20242e"/><rect x="654" y="498" width="6.5" height="6.5" fill="#1c2028"/><rect x="654" y="504" width="6.5" height="6.5" fill="#2e3444"/><rect x="654" y="510" width="6.5" height="6.5" fill="#20242e"/><rect x="654" y="516" width="6.5" height="6.5" fill="#2e3444"/><rect x="654" y="522" width="6.5" height="6.5" fill="#1c2028"/><rect x="654" y="528" width="6.5" height="6.5" fill="#2e3444"/><rect x="654" y="534" width="6.5" height="6.5" fill="#20242e"/><rect x="654" y="540" width="6.5" height="6.5" fill="#22262e"/><rect x="654" y="546" width="6.5" height="6.5" fill="#20242e"/><rect x="654" y="552" width="6.5" height="6.5" fill="#2a303e"/><rect x="654" y="558" width="6.5" height="6.5" fill="#343c4c"/><rect x="660" y="474" width="6.5" height="6.5" fill="#262c3a"/><rect x="660" y="480" width="6.5" height="6.5" fill="#343c4c"/><rect x="660" y="486" width="6.5" height="6.5" fill="#22262e"/><rect x="660" y="492" width="6.5" height="6.5" fill="#1c2028"/><rect x="660" y="498" width="6.5" height="6.5" fill="#1c2028"/><rect x="660" y="504" width="6.5" height="6.5" fill="#464e60"/><rect x="660" y="510" width="6.5" height="6.5" fill="#22262e"/><rect x="660" y="516" width="6.5" height="6.5" fill="#262c3a"/><rect x="660" y="522" width="6.5" height="6.5" fill="#1c2028"/><rect x="660" y="528" width="6.5" height="6.5" fill="#464e60"/><rect x="660" y="534" width="6.5" height="6.5" fill="#20242e"/><rect x="660" y="540" width="6.5" height="6.5" fill="#2e3444"/><rect x="660" y="546" width="6.5" height="6.5" fill="#262c3a"/><rect x="660" y="552" width="6.5" height="6.5" fill="#343c4c"/><rect x="660" y="558" width="6.5" height="6.5" fill="#1c2028"/><rect x="666" y="474" width="6.5" height="6.5" fill="#1c2028"/><rect x="666" y="480" width="6.5" height="6.5" fill="#2a303e"/><rect x="666" y="486" width="6.5" height="6.5" fill="#1c2028"/><rect x="666" y="492" width="6.5" height="6.5" fill="#464e60"/><rect x="666" y="498" width="6.5" height="6.5" fill="#262c3a"/><rect x="666" y="504" width="6.5" height="6.5" fill="#464e60"/><rect x="666" y="510" width="6.5" height="6.5" fill="#1c2028"/><rect x="666" y="516" width="6.5" height="6.5" fill="#464e60"/><rect x="666" y="522" width="6.5" height="6.5" fill="#2a303e"/><rect x="666" y="528" width="6.5" height="6.5" fill="#262c3a"/><rect x="666" y="534" width="6.5" height="6.5" fill="#2a303e"/><rect x="666" y="540" width="6.5" height="6.5" fill="#464e60"/><rect x="666" y="546" width="6.5" height="6.5" fill="#22262e"/><rect x="666" y="552" width="6.5" height="6.5" fill="#2a303e"/><rect x="666" y="558" width="6.5" height="6.5" fill="#20242e"/><rect x="672" y="474" width="6.5" height="6.5" fill="#262c3a"/><rect x="672" y="480" width="6.5" height="6.5" fill="#2e3444"/><rect x="672" y="486" width="6.5" height="6.5" fill="#20242e"/><rect x="672" y="492" width="6.5" height="6.5" fill="#343c4c"/><rect x="672" y="498" width="6.5" height="6.5" fill="#1c2028"/><rect x="672" y="504" width="6.5" height="6.5" fill="#464e60"/><rect x="672" y="510" width="6.5" height="6.5" fill="#22262e"/><rect x="672" y="516" width="6.5" height="6.5" fill="#2e3444"/><rect x="672" y="522" width="6.5" height="6.5" fill="#2a303e"/><rect x="672" y="528" width="6.5" height="6.5" fill="#20242e"/><rect x="672" y="534" width="6.5" height="6.5" fill="#20242e"/><rect x="672" y="540" width="6.5" height="6.5" fill="#22262e"/><rect x="672" y="546" width="6.5" height="6.5" fill="#1c2028"/><rect x="672" y="552" width="6.5" height="6.5" fill="#343c4c"/><rect x="672" y="558" width="6.5" height="6.5" fill="#2a303e"/><rect x="678" y="474" width="6.5" height="6.5" fill="#2a303e"/><rect x="678" y="480" width="6.5" height="6.5" fill="#2e3444"/><rect x="678" y="486" width="6.5" height="6.5" fill="#262c3a"/><rect x="678" y="492" width="6.5" height="6.5" fill="#2a303e"/><rect x="678" y="498" width="6.5" height="6.5" fill="#2e3444"/><rect x="678" y="504" width="6.5" height="6.5" fill="#1c2028"/><rect x="678" y="510" width="6.5" height="6.5" fill="#2a303e"/><rect x="678" y="516" width="6.5" height="6.5" fill="#20242e"/><rect x="678" y="522" width="6.5" height="6.5" fill="#2e3444"/><rect x="678" y="528" width="6.5" height="6.5" fill="#464e60"/><rect x="678" y="534" width="6.5" height="6.5" fill="#2a303e"/><rect x="678" y="540" width="6.5" height="6.5" fill="#22262e"/><rect x="678" y="546" width="6.5" height="6.5" fill="#2a303e"/><rect x="678" y="552" width="6.5" height="6.5" fill="#22262e"/><rect x="678" y="558" width="6.5" height="6.5" fill="#22262e"/><rect x="684" y="474" width="6.5" height="6.5" fill="#1c2028"/><rect x="684" y="480" width="6.5" height="6.5" fill="#22262e"/><rect x="684" y="486" width="6.5" height="6.5" fill="#464e60"/><rect x="684" y="492" width="6.5" height="6.5" fill="#464e60"/><rect x="684" y="498" width="6.5" height="6.5" fill="#22262e"/><rect x="684" y="504" width="6.5" height="6.5" fill="#2e3444"/><rect x="684" y="510" width="6.5" height="6.5" fill="#2a303e"/><rect x="684" y="516" width="6.5" height="6.5" fill="#262c3a"/><rect x="684" y="522" width="6.5" height="6.5" fill="#2e3444"/><rect x="684" y="528" width="6.5" height="6.5" fill="#2a303e"/><rect x="684" y="534" width="6.5" height="6.5" fill="#22262e"/><rect x="684" y="540" width="6.5" height="6.5" fill="#1c2028"/><rect x="684" y="546" width="6.5" height="6.5" fill="#2a303e"/><rect x="684" y="552" width="6.5" height="6.5" fill="#262c3a"/><rect x="684" y="558" width="6.5" height="6.5" fill="#22262e"/><rect x="690" y="474" width="6.5" height="6.5" fill="#464e60"/><rect x="690" y="480" width="6.5" height="6.5" fill="#1c2028"/><rect x="690" y="486" width="6.5" height="6.5" fill="#262c3a"/><rect x="690" y="492" width="6.5" height="6.5" fill="#1c2028"/><rect x="690" y="498" width="6.5" height="6.5" fill="#20242e"/><rect x="690" y="504" width="6.5" height="6.5" fill="#464e60"/><rect x="690" y="510" width="6.5" height="6.5" fill="#1c2028"/><rect x="690" y="516" width="6.5" height="6.5" fill="#464e60"/><rect x="690" y="522" width="6.5" height="6.5" fill="#22262e"/><rect x="690" y="528" width="6.5" height="6.5" fill="#464e60"/><rect x="690" y="534" width="6.5" height="6.5" fill="#464e60"/><rect x="690" y="540" width="6.5" height="6.5" fill="#1c2028"/><rect x="690" y="546" width="6.5" height="6.5" fill="#2a303e"/><rect x="690" y="552" width="6.5" height="6.5" fill="#20242e"/><rect x="690" y="558" width="6.5" height="6.5" fill="#22262e"/></g><polygon points="620,439 706,439 706,475 645,475 627,458 620,458" fill="#242c3a"/><rect x="627" y="426" width="253" height="20" fill="#38524c"/><rect x="627" y="438" width="253" height="8" fill="#304842"/><rect x="830" y="428" width="50" height="14" fill="#486660" opacity=".7"/><rect x="835" y="432" width="6" height="6" fill="#1e2628"/><rect x="644" y="406" width="236" height="21" fill="#2a323e"/><rect x="700" y="409" width="110" height="8" fill="#323a48"/><rect x="742" y="415" width="14" height="8" fill="#22262e"/><rect x="815" y="411" width="27" height="13" fill="#22242c"/><polygon points="645,406 659,384 916,384 916,406" fill="#36514f"/><rect x="690" y="388" width="12" height="12" fill="#2e4646" opacity=".9"/><rect x="730" y="386" width="160" height="10" fill="#3a5656" opacity=".6"/><rect x="646" y="388" width="12" height="18" fill="#1a1c24"/><rect x="631" y="404" width="17" height="20" fill="#1c2029"/><polyline points="707,446 708,472 718,484 770,482 770,446" fill="none" stroke="#15161c" stroke-width="3"/><polygon points="714,446 738,446 733,457 737,474 730,475 723,460" fill="#23273a"/><rect x="772" y="466" width="71" height="112" fill="#2b3244"/><rect x="783" y="486" width="6.5" height="6.5" fill="#202226"/><rect x="789" y="486" width="6.5" height="6.5" fill="#26282a"/><rect x="795" y="486" width="6.5" height="6.5" fill="#202226"/><rect x="801" y="486" width="6.5" height="6.5" fill="#202226"/><rect x="807" y="486" width="6.5" height="6.5" fill="#1a1c1e"/><rect x="813" y="486" width="6.5" height="6.5" fill="#1a1c1e"/><rect x="819" y="486" width="6.5" height="6.5" fill="#26282a"/><rect x="825" y="486" width="6.5" height="6.5" fill="#1a1c1e"/><rect x="831" y="486" width="6.5" height="6.5" fill="#202226"/><rect x="837" y="486" width="6.5" height="6.5" fill="#26282a"/><rect x="783" y="492" width="6.5" height="6.5" fill="#34362e"/><rect x="789" y="492" width="6.5" height="6.5" fill="#2c2e2a"/><rect x="795" y="492" width="6.5" height="6.5" fill="#46483c"/><rect x="801" y="492" width="6.5" height="6.5" fill="#2c2e2a"/><rect x="807" y="492" width="6.5" height="6.5" fill="#34362e"/><rect x="813" y="492" width="6.5" height="6.5" fill="#3a3c34"/><rect x="819" y="492" width="6.5" height="6.5" fill="#34362e"/><rect x="825" y="492" width="6.5" height="6.5" fill="#34362e"/><rect x="831" y="492" width="6.5" height="6.5" fill="#3a3c34"/><rect x="837" y="492" width="6.5" height="6.5" fill="#3a3c34"/><rect x="783" y="498" width="6.5" height="6.5" fill="#1a1c1e"/><rect x="789" y="498" width="6.5" height="6.5" fill="#1a1c1e"/><rect x="795" y="498" width="6.5" height="6.5" fill="#1a1c1e"/><rect x="801" y="498" width="6.5" height="6.5" fill="#1a1c1e"/><rect x="807" y="498" width="6.5" height="6.5" fill="#26282a"/><rect x="813" y="498" width="6.5" height="6.5" fill="#26282a"/><rect x="819" y="498" width="6.5" height="6.5" fill="#1a1c1e"/><rect x="825" y="498" width="6.5" height="6.5" fill="#26282a"/><rect x="831" y="498" width="6.5" height="6.5" fill="#202226"/><rect x="837" y="498" width="6.5" height="6.5" fill="#26282a"/><rect x="783" y="504" width="6.5" height="6.5" fill="#2c2e2a"/><rect x="789" y="504" width="6.5" height="6.5" fill="#46483c"/><rect x="795" y="504" width="6.5" height="6.5" fill="#3a3c34"/><rect x="801" y="504" width="6.5" height="6.5" fill="#3a3c34"/><rect x="807" y="504" width="6.5" height="6.5" fill="#34362e"/><rect x="813" y="504" width="6.5" height="6.5" fill="#2c2e2a"/><rect x="819" y="504" width="6.5" height="6.5" fill="#46483c"/><rect x="825" y="504" width="6.5" height="6.5" fill="#3a3c34"/><rect x="831" y="504" width="6.5" height="6.5" fill="#34362e"/><rect x="837" y="504" width="6.5" height="6.5" fill="#46483c"/><rect x="783" y="510" width="6.5" height="6.5" fill="#202226"/><rect x="789" y="510" width="6.5" height="6.5" fill="#1a1c1e"/><rect x="795" y="510" width="6.5" height="6.5" fill="#1a1c1e"/><rect x="801" y="510" width="6.5" height="6.5" fill="#26282a"/><rect x="807" y="510" width="6.5" height="6.5" fill="#1a1c1e"/><rect x="813" y="510" width="6.5" height="6.5" fill="#202226"/><rect x="819" y="510" width="6.5" height="6.5" fill="#1a1c1e"/><rect x="825" y="510" width="6.5" height="6.5" fill="#202226"/><rect x="831" y="510" width="6.5" height="6.5" fill="#202226"/><rect x="837" y="510" width="6.5" height="6.5" fill="#1a1c1e"/><rect x="783" y="516" width="6.5" height="6.5" fill="#2c2e2a"/><rect x="789" y="516" width="6.5" height="6.5" fill="#3a3c34"/><rect x="795" y="516" width="6.5" height="6.5" fill="#34362e"/><rect x="801" y="516" width="6.5" height="6.5" fill="#2c2e2a"/><rect x="807" y="516" width="6.5" height="6.5" fill="#2c2e2a"/><rect x="813" y="516" width="6.5" height="6.5" fill="#2c2e2a"/><rect x="819" y="516" width="6.5" height="6.5" fill="#3a3c34"/><rect x="825" y="516" width="6.5" height="6.5" fill="#3a3c34"/><rect x="831" y="516" width="6.5" height="6.5" fill="#46483c"/><rect x="837" y="516" width="6.5" height="6.5" fill="#2c2e2a"/><rect x="783" y="522" width="6.5" height="6.5" fill="#1a1c1e"/><rect x="789" y="522" width="6.5" height="6.5" fill="#1a1c1e"/><rect x="795" y="522" width="6.5" height="6.5" fill="#26282a"/><rect x="801" y="522" width="6.5" height="6.5" fill="#1a1c1e"/><rect x="807" y="522" width="6.5" height="6.5" fill="#26282a"/><rect x="813" y="522" width="6.5" height="6.5" fill="#1a1c1e"/><rect x="819" y="522" width="6.5" height="6.5" fill="#26282a"/><rect x="825" y="522" width="6.5" height="6.5" fill="#202226"/><rect x="831" y="522" width="6.5" height="6.5" fill="#26282a"/><rect x="837" y="522" width="6.5" height="6.5" fill="#1a1c1e"/><rect x="783" y="528" width="6.5" height="6.5" fill="#34362e"/><rect x="789" y="528" width="6.5" height="6.5" fill="#2c2e2a"/><rect x="795" y="528" width="6.5" height="6.5" fill="#34362e"/><rect x="801" y="528" width="6.5" height="6.5" fill="#3a3c34"/><rect x="807" y="528" width="6.5" height="6.5" fill="#2c2e2a"/><rect x="813" y="528" width="6.5" height="6.5" fill="#3a3c34"/><rect x="819" y="528" width="6.5" height="6.5" fill="#3a3c34"/><rect x="825" y="528" width="6.5" height="6.5" fill="#2c2e2a"/><rect x="831" y="528" width="6.5" height="6.5" fill="#2c2e2a"/><rect x="837" y="528" width="6.5" height="6.5" fill="#46483c"/><rect x="783" y="534" width="6.5" height="6.5" fill="#26282a"/><rect x="789" y="534" width="6.5" height="6.5" fill="#26282a"/><rect x="795" y="534" width="6.5" height="6.5" fill="#26282a"/><rect x="801" y="534" width="6.5" height="6.5" fill="#1a1c1e"/><rect x="807" y="534" width="6.5" height="6.5" fill="#26282a"/><rect x="813" y="534" width="6.5" height="6.5" fill="#202226"/><rect x="819" y="534" width="6.5" height="6.5" fill="#26282a"/><rect x="825" y="534" width="6.5" height="6.5" fill="#26282a"/><rect x="831" y="534" width="6.5" height="6.5" fill="#1a1c1e"/><rect x="837" y="534" width="6.5" height="6.5" fill="#1a1c1e"/><rect x="783" y="540" width="6.5" height="6.5" fill="#34362e"/><rect x="789" y="540" width="6.5" height="6.5" fill="#3a3c34"/><rect x="795" y="540" width="6.5" height="6.5" fill="#3a3c34"/><rect x="801" y="540" width="6.5" height="6.5" fill="#2c2e2a"/><rect x="807" y="540" width="6.5" height="6.5" fill="#46483c"/><rect x="813" y="540" width="6.5" height="6.5" fill="#2c2e2a"/><rect x="819" y="540" width="6.5" height="6.5" fill="#46483c"/><rect x="825" y="540" width="6.5" height="6.5" fill="#2c2e2a"/><rect x="831" y="540" width="6.5" height="6.5" fill="#46483c"/><rect x="837" y="540" width="6.5" height="6.5" fill="#34362e"/><rect x="772" y="546" width="6.5" height="6.5" fill="#2e3848"/><rect x="778" y="546" width="6.5" height="6.5" fill="#1e2430"/><rect x="784" y="546" width="6.5" height="6.5" fill="#2e3848"/><rect x="790" y="546" width="6.5" height="6.5" fill="#44506a"/><rect x="796" y="546" width="6.5" height="6.5" fill="#283040"/><rect x="802" y="546" width="6.5" height="6.5" fill="#262e3e"/><rect x="808" y="546" width="6.5" height="6.5" fill="#1e2430"/><rect x="814" y="546" width="6.5" height="6.5" fill="#44506a"/><rect x="820" y="546" width="6.5" height="6.5" fill="#384458"/><rect x="826" y="546" width="6.5" height="6.5" fill="#262e3e"/><rect x="832" y="546" width="6.5" height="6.5" fill="#1e2430"/><rect x="838" y="546" width="6.5" height="6.5" fill="#262e3e"/><rect x="772" y="552" width="6.5" height="6.5" fill="#2e3848"/><rect x="778" y="552" width="6.5" height="6.5" fill="#2e3848"/><rect x="784" y="552" width="6.5" height="6.5" fill="#1e2430"/><rect x="790" y="552" width="6.5" height="6.5" fill="#384458"/><rect x="796" y="552" width="6.5" height="6.5" fill="#384458"/><rect x="802" y="552" width="6.5" height="6.5" fill="#262e3e"/><rect x="808" y="552" width="6.5" height="6.5" fill="#384458"/><rect x="814" y="552" width="6.5" height="6.5" fill="#283040"/><rect x="820" y="552" width="6.5" height="6.5" fill="#384458"/><rect x="826" y="552" width="6.5" height="6.5" fill="#262e3e"/><rect x="832" y="552" width="6.5" height="6.5" fill="#44506a"/><rect x="838" y="552" width="6.5" height="6.5" fill="#262e3e"/><rect x="772" y="558" width="6.5" height="6.5" fill="#262e3e"/><rect x="778" y="558" width="6.5" height="6.5" fill="#1e2430"/><rect x="784" y="558" width="6.5" height="6.5" fill="#44506a"/><rect x="790" y="558" width="6.5" height="6.5" fill="#1e2430"/><rect x="796" y="558" width="6.5" height="6.5" fill="#1e2430"/><rect x="802" y="558" width="6.5" height="6.5" fill="#384458"/><rect x="808" y="558" width="6.5" height="6.5" fill="#283040"/><rect x="814" y="558" width="6.5" height="6.5" fill="#2e3848"/><rect x="820" y="558" width="6.5" height="6.5" fill="#44506a"/><rect x="826" y="558" width="6.5" height="6.5" fill="#283040"/><rect x="832" y="558" width="6.5" height="6.5" fill="#262e3e"/><rect x="838" y="558" width="6.5" height="6.5" fill="#1e2430"/><rect x="772" y="564" width="6.5" height="6.5" fill="#283040"/><rect x="778" y="564" width="6.5" height="6.5" fill="#2e3848"/><rect x="784" y="564" width="6.5" height="6.5" fill="#262e3e"/><rect x="790" y="564" width="6.5" height="6.5" fill="#1e2430"/><rect x="796" y="564" width="6.5" height="6.5" fill="#44506a"/><rect x="802" y="564" width="6.5" height="6.5" fill="#384458"/><rect x="808" y="564" width="6.5" height="6.5" fill="#44506a"/><rect x="814" y="564" width="6.5" height="6.5" fill="#384458"/><rect x="820" y="564" width="6.5" height="6.5" fill="#2e3848"/><rect x="826" y="564" width="6.5" height="6.5" fill="#283040"/><rect x="832" y="564" width="6.5" height="6.5" fill="#384458"/><rect x="838" y="564" width="6.5" height="6.5" fill="#2e3848"/><rect x="772" y="570" width="6.5" height="6.5" fill="#283040"/><rect x="778" y="570" width="6.5" height="6.5" fill="#384458"/><rect x="784" y="570" width="6.5" height="6.5" fill="#262e3e"/><rect x="790" y="570" width="6.5" height="6.5" fill="#262e3e"/><rect x="796" y="570" width="6.5" height="6.5" fill="#2e3848"/><rect x="802" y="570" width="6.5" height="6.5" fill="#384458"/><rect x="808" y="570" width="6.5" height="6.5" fill="#2e3848"/><rect x="814" y="570" width="6.5" height="6.5" fill="#262e3e"/><rect x="820" y="570" width="6.5" height="6.5" fill="#44506a"/><rect x="826" y="570" width="6.5" height="6.5" fill="#2e3848"/><rect x="832" y="570" width="6.5" height="6.5" fill="#262e3e"/><rect x="838" y="570" width="6.5" height="6.5" fill="#262e3e"/><rect x="772" y="576" width="6.5" height="2" fill="#262e3e"/><rect x="778" y="576" width="6.5" height="2" fill="#1e2430"/><rect x="784" y="576" width="6.5" height="2" fill="#2e3848"/><rect x="790" y="576" width="6.5" height="2" fill="#1e2430"/><rect x="796" y="576" width="6.5" height="2" fill="#384458"/><rect x="802" y="576" width="6.5" height="2" fill="#44506a"/><rect x="808" y="576" width="6.5" height="2" fill="#262e3e"/><rect x="814" y="576" width="6.5" height="2" fill="#384458"/><rect x="820" y="576" width="6.5" height="2" fill="#384458"/><rect x="826" y="576" width="6.5" height="2" fill="#2e3848"/><rect x="832" y="576" width="6.5" height="2" fill="#1e2430"/><rect x="838" y="576" width="6.5" height="2" fill="#44506a"/><rect x="772" y="466" width="6" height="6.5" fill="#34405a"/><rect x="778" y="466" width="6" height="6.5" fill="#2a3448"/><rect x="772" y="472" width="6" height="6.5" fill="#2a3448"/><rect x="778" y="472" width="6" height="6.5" fill="#222a38"/><rect x="772" y="478" width="6" height="6.5" fill="#222a38"/><rect x="778" y="478" width="6" height="6.5" fill="#34405a"/><rect x="772" y="484" width="6" height="6.5" fill="#222a38"/><rect x="778" y="484" width="6" height="6.5" fill="#2a3448"/><rect x="772" y="490" width="6" height="6.5" fill="#2a3448"/><rect x="778" y="490" width="6" height="6.5" fill="#34405a"/><rect x="772" y="496" width="6" height="6.5" fill="#34405a"/><rect x="778" y="496" width="6" height="6.5" fill="#2a3448"/><rect x="772" y="502" width="6" height="6.5" fill="#222a38"/><rect x="778" y="502" width="6" height="6.5" fill="#222a38"/><rect x="772" y="508" width="6" height="6.5" fill="#34405a"/><rect x="778" y="508" width="6" height="6.5" fill="#222a38"/><rect x="772" y="514" width="6" height="6.5" fill="#2a3448"/><rect x="778" y="514" width="6" height="6.5" fill="#222a38"/><rect x="772" y="520" width="6" height="6.5" fill="#222a38"/><rect x="778" y="520" width="6" height="6.5" fill="#34405a"/><rect x="772" y="526" width="6" height="6.5" fill="#222a38"/><rect x="778" y="526" width="6" height="6.5" fill="#222a38"/><rect x="772" y="532" width="6" height="6.5" fill="#34405a"/><rect x="778" y="532" width="6" height="6.5" fill="#34405a"/><rect x="772" y="538" width="6" height="6.5" fill="#2a3448"/><rect x="778" y="538" width="6" height="6.5" fill="#2a3448"/><rect x="772" y="544" width="6" height="6.5" fill="#34405a"/><rect x="778" y="544" width="6" height="6.5" fill="#222a38"/><polygon points="771,446 845,446 845,467 772,489" fill="#4b6a70"/><rect x="880" y="405" width="128" height="41" fill="url(#hg)"/><polygon points="873,445 985,445 985,450 873,448" fill="#17181e"/><rect x="880" y="405" width="8" height="7" fill="#604848" opacity=".5"/><rect x="896" y="405" width="8" height="7" fill="#5c4242" opacity=".5"/><rect x="912" y="405" width="8" height="7" fill="#523a3a" opacity=".5"/><rect x="920" y="405" width="8" height="7" fill="#523a3a" opacity=".5"/><rect x="928" y="405" width="8" height="7" fill="#4a3434" opacity=".5"/><rect x="936" y="405" width="8" height="7" fill="#523a3a" opacity=".5"/><rect x="944" y="405" width="8" height="7" fill="#5c4242" opacity=".5"/><rect x="960" y="405" width="8" height="7" fill="#5c4242" opacity=".5"/><rect x="976" y="405" width="8" height="7" fill="#604848" opacity=".5"/><rect x="992" y="405" width="8" height="7" fill="#3e2c2e" opacity=".5"/><rect x="904" y="412" width="8" height="7" fill="#4a3434" opacity=".5"/><rect x="912" y="412" width="8" height="7" fill="#4a3434" opacity=".5"/><rect x="920" y="412" width="8" height="7" fill="#523a3a" opacity=".5"/><rect x="936" y="412" width="8" height="7" fill="#5c4242" opacity=".5"/><rect x="944" y="412" width="8" height="7" fill="#4a3434" opacity=".5"/><rect x="952" y="412" width="8" height="7" fill="#5c4242" opacity=".5"/><rect x="960" y="412" width="8" height="7" fill="#5c4242" opacity=".5"/><rect x="968" y="412" width="8" height="7" fill="#523a3a" opacity=".5"/><rect x="984" y="412" width="8" height="7" fill="#523a3a" opacity=".5"/><rect x="992" y="412" width="8" height="7" fill="#604848" opacity=".5"/><rect x="1000" y="412" width="8" height="7" fill="#5c4242" opacity=".5"/><rect x="888" y="419" width="8" height="7" fill="#3e2c2e" opacity=".5"/><rect x="912" y="419" width="8" height="7" fill="#604848" opacity=".5"/><rect x="920" y="419" width="8" height="7" fill="#4a3434" opacity=".5"/><rect x="936" y="419" width="8" height="7" fill="#604848" opacity=".5"/><rect x="944" y="419" width="8" height="7" fill="#4a3434" opacity=".5"/><rect x="968" y="419" width="8" height="7" fill="#523a3a" opacity=".5"/><rect x="976" y="419" width="8" height="7" fill="#523a3a" opacity=".5"/><rect x="984" y="419" width="8" height="7" fill="#5c4242" opacity=".5"/><rect x="880" y="426" width="8" height="7" fill="#523a3a" opacity=".5"/><rect x="896" y="426" width="8" height="7" fill="#5c4242" opacity=".5"/><rect x="904" y="426" width="8" height="7" fill="#5c4242" opacity=".5"/><rect x="920" y="426" width="8" height="7" fill="#4a3434" opacity=".5"/><rect x="952" y="426" width="8" height="7" fill="#5c4242" opacity=".5"/><rect x="984" y="426" width="8" height="7" fill="#604848" opacity=".5"/><rect x="880" y="433" width="8" height="7" fill="#523a3a" opacity=".5"/><rect x="888" y="433" width="8" height="7" fill="#604848" opacity=".5"/><rect x="904" y="433" width="8" height="7" fill="#3e2c2e" opacity=".5"/><rect x="912" y="433" width="8" height="7" fill="#3e2c2e" opacity=".5"/><rect x="928" y="433" width="8" height="7" fill="#5c4242" opacity=".5"/><rect x="936" y="433" width="8" height="7" fill="#4a3434" opacity=".5"/><rect x="960" y="433" width="8" height="7" fill="#5c4242" opacity=".5"/><rect x="976" y="433" width="8" height="7" fill="#3e2c2e" opacity=".5"/><rect x="984" y="433" width="8" height="7" fill="#523a3a" opacity=".5"/><rect x="1000" y="433" width="8" height="7" fill="#5c4242" opacity=".5"/><rect x="888" y="440" width="8" height="6" fill="#5c4242" opacity=".5"/><rect x="912" y="440" width="8" height="6" fill="#523a3a" opacity=".5"/><rect x="928" y="440" width="8" height="6" fill="#5c4242" opacity=".5"/><rect x="944" y="440" width="8" height="6" fill="#4a3434" opacity=".5"/><rect x="952" y="440" width="8" height="6" fill="#5c4242" opacity=".5"/><rect x="968" y="440" width="8" height="6" fill="#523a3a" opacity=".5"/><rect x="976" y="440" width="8" height="6" fill="#5c4242" opacity=".5"/><rect x="1000" y="440" width="8" height="6" fill="#604848" opacity=".5"/><polygon points="916,380 980,380 980,371 1000,371 1000,379 1008,388 1008,405 916,405" fill="#1e1f28"/><rect x="1007" y="399" width="9" height="42" fill="#1d1e26"/><rect x="1015" y="394" width="177" height="51" rx="2" fill="url(#supp)"/><rect x="1018" y="402" width="8" height="8" fill="#363e52" opacity=".45"/><rect x="1058" y="402" width="8" height="8" fill="#2e3648" opacity=".45"/><rect x="1074" y="402" width="8" height="8" fill="#1e2230" opacity=".45"/><rect x="1082" y="402" width="8" height="8" fill="#363e52" opacity=".45"/><rect x="1106" y="402" width="8" height="8" fill="#1e2230" opacity=".45"/><rect x="1122" y="402" width="8" height="8" fill="#1e2230" opacity=".45"/><rect x="1162" y="402" width="8" height="8" fill="#363e52" opacity=".45"/><rect x="1170" y="402" width="8" height="8" fill="#3a4258" opacity=".45"/><rect x="1034" y="410" width="8" height="8" fill="#1e2230" opacity=".45"/><rect x="1066" y="410" width="8" height="8" fill="#3a4258" opacity=".45"/><rect x="1082" y="410" width="8" height="8" fill="#363e52" opacity=".45"/><rect x="1098" y="410" width="8" height="8" fill="#3a4258" opacity=".45"/><rect x="1106" y="410" width="8" height="8" fill="#1e2230" opacity=".45"/><rect x="1114" y="410" width="8" height="8" fill="#363e52" opacity=".45"/><rect x="1162" y="410" width="8" height="8" fill="#3a4258" opacity=".45"/><rect x="1186" y="410" width="8" height="8" fill="#3a4258" opacity=".45"/><rect x="1026" y="418" width="8" height="8" fill="#363e52" opacity=".45"/><rect x="1034" y="418" width="8" height="8" fill="#3a4258" opacity=".45"/><rect x="1050" y="418" width="8" height="8" fill="#3a4258" opacity=".45"/><rect x="1066" y="418" width="8" height="8" fill="#1e2230" opacity=".45"/><rect x="1074" y="418" width="8" height="8" fill="#1e2230" opacity=".45"/><rect x="1114" y="418" width="8" height="8" fill="#3a4258" opacity=".45"/><rect x="1122" y="418" width="8" height="8" fill="#2e3648" opacity=".45"/><rect x="1146" y="418" width="8" height="8" fill="#1e2230" opacity=".45"/><rect x="1154" y="418" width="8" height="8" fill="#363e52" opacity=".45"/><rect x="1162" y="418" width="8" height="8" fill="#2e3648" opacity=".45"/><rect x="1178" y="418" width="8" height="8" fill="#3a4258" opacity=".45"/><rect x="1034" y="426" width="8" height="8" fill="#3a4258" opacity=".45"/><rect x="1066" y="426" width="8" height="8" fill="#1e2230" opacity=".45"/><rect x="1074" y="426" width="8" height="8" fill="#1e2230" opacity=".45"/><rect x="1130" y="426" width="8" height="8" fill="#1e2230" opacity=".45"/><rect x="1138" y="426" width="8" height="8" fill="#3a4258" opacity=".45"/><rect x="1170" y="426" width="8" height="8" fill="#363e52" opacity=".45"/><rect x="1178" y="426" width="8" height="8" fill="#2e3648" opacity=".45"/><rect x="1186" y="426" width="8" height="8" fill="#363e52" opacity=".45"/></g>
<g clip-path="url(#gc)">
<rect x="300" y="630" width="900" height="140" fill="#ffffff" opacity=".24"/>
</g>
<polygon points="798.5,678.5 914.5,678.5 942,697 811,697" fill="#9a8262"/><polygon points="798.5,678.5 811,697 811,828.5 798.5,796" fill="#8a7254"/><rect x="811" y="697" width="131" height="131.5" fill="#a68c68"/><rect x="868.4" y="729.8" width="8.2" height="8.2" fill="#9c8460" opacity=".6"/><rect x="934.0" y="713.4" width="8.2" height="8.2" fill="#7c6446" opacity=".6"/><rect x="811.0" y="820.0" width="8.2" height="8.2" fill="#9c8460" opacity=".6"/><rect x="868.4" y="746.2" width="8.2" height="8.2" fill="#c0a47e" opacity=".6"/><rect x="934.0" y="820.0" width="8.2" height="8.2" fill="#ae9470" opacity=".6"/><rect x="843.8" y="754.4" width="8.2" height="8.2" fill="#c0a47e" opacity=".6"/><rect x="843.8" y="795.4" width="8.2" height="8.2" fill="#c0a47e" opacity=".6"/><rect x="811.0" y="713.4" width="8.2" height="8.2" fill="#b89e78" opacity=".6"/><rect x="819.2" y="770.8" width="8.2" height="8.2" fill="#8a6e50" opacity=".6"/><rect x="876.6" y="820.0" width="8.2" height="8.2" fill="#7c6446" opacity=".6"/><rect x="909.4" y="803.6" width="8.2" height="8.2" fill="#ae9470" opacity=".6"/><rect x="925.8" y="729.8" width="8.2" height="8.2" fill="#9c8460" opacity=".6"/><rect x="835.6" y="705.2" width="8.2" height="8.2" fill="#b89e78" opacity=".6"/><rect x="934.0" y="746.2" width="8.2" height="8.2" fill="#9c8460" opacity=".6"/><rect x="917.6" y="770.8" width="8.2" height="8.2" fill="#ae9470" opacity=".6"/><rect x="909.4" y="787.2" width="8.2" height="8.2" fill="#7c6446" opacity=".6"/><rect x="917.6" y="754.4" width="8.2" height="8.2" fill="#9c8460" opacity=".6"/><rect x="811.0" y="762.6" width="8.2" height="8.2" fill="#7c6446" opacity=".6"/><rect x="852.0" y="779.0" width="8.2" height="8.2" fill="#7c6446" opacity=".6"/><rect x="835.6" y="746.2" width="8.2" height="8.2" fill="#c0a47e" opacity=".6"/><rect x="876.6" y="770.8" width="8.2" height="8.2" fill="#8a6e50" opacity=".6"/><rect x="827.4" y="820.0" width="8.2" height="8.2" fill="#c0a47e" opacity=".6"/><rect x="934.0" y="713.4" width="8.2" height="8.2" fill="#9c8460" opacity=".6"/><rect x="827.4" y="803.6" width="8.2" height="8.2" fill="#b89e78" opacity=".6"/><rect x="811.0" y="770.8" width="8.2" height="8.2" fill="#ae9470" opacity=".6"/><rect x="917.6" y="721.6" width="8.2" height="8.2" fill="#8a6e50" opacity=".6"/><rect x="819.2" y="795.4" width="8.2" height="8.2" fill="#c0a47e" opacity=".6"/><rect x="893.0" y="762.6" width="8.2" height="8.2" fill="#7c6446" opacity=".6"/><rect x="868.4" y="705.2" width="8.2" height="8.2" fill="#9c8460" opacity=".6"/><rect x="811.0" y="713.4" width="8.2" height="8.2" fill="#8a6e50" opacity=".6"/><rect x="819.2" y="746.2" width="8.2" height="8.2" fill="#ae9470" opacity=".6"/><rect x="884.8" y="762.6" width="8.2" height="8.2" fill="#b89e78" opacity=".6"/><rect x="819.2" y="779.0" width="8.2" height="8.2" fill="#9c8460" opacity=".6"/><rect x="901.2" y="729.8" width="8.2" height="8.2" fill="#ae9470" opacity=".6"/><rect x="909.4" y="811.8" width="8.2" height="8.2" fill="#7c6446" opacity=".6"/><rect x="909.4" y="721.6" width="8.2" height="8.2" fill="#7c6446" opacity=".6"/><rect x="876.6" y="803.6" width="8.2" height="8.2" fill="#c0a47e" opacity=".6"/><rect x="868.4" y="770.8" width="8.2" height="8.2" fill="#ae9470" opacity=".6"/><rect x="876.6" y="770.8" width="8.2" height="8.2" fill="#7c6446" opacity=".6"/><rect x="893.0" y="697.0" width="8.2" height="8.2" fill="#ae9470" opacity=".6"/><rect x="893.0" y="697.0" width="8.2" height="8.2" fill="#ae9470" opacity=".6"/><rect x="843.8" y="705.2" width="8.2" height="8.2" fill="#c0a47e" opacity=".6"/><rect x="893.0" y="811.8" width="8.2" height="8.2" fill="#9c8460" opacity=".6"/><rect x="901.2" y="762.6" width="8.2" height="8.2" fill="#c0a47e" opacity=".6"/><rect x="934.0" y="697.0" width="8.2" height="8.2" fill="#7c6446" opacity=".6"/><rect x="819.2" y="697.0" width="8.2" height="8.2" fill="#9c8460" opacity=".6"/><rect x="876.6" y="811.8" width="8.2" height="8.2" fill="#9c8460" opacity=".6"/><rect x="893.0" y="738.0" width="8.2" height="8.2" fill="#9c8460" opacity=".6"/><rect x="852.0" y="779.0" width="8.2" height="8.2" fill="#9c8460" opacity=".6"/><rect x="876.6" y="770.8" width="8.2" height="8.2" fill="#ae9470" opacity=".6"/><rect x="835.6" y="697.0" width="8.2" height="8.2" fill="#7c6446" opacity=".6"/><rect x="843.8" y="770.8" width="8.2" height="8.2" fill="#7c6446" opacity=".6"/><rect x="868.4" y="762.6" width="8.2" height="8.2" fill="#b89e78" opacity=".6"/><rect x="893.0" y="738.0" width="8.2" height="8.2" fill="#c0a47e" opacity=".6"/><rect x="917.6" y="721.6" width="8.2" height="8.2" fill="#8a6e50" opacity=".6"/><rect x="893.0" y="779.0" width="8.2" height="8.2" fill="#c0a47e" opacity=".6"/><rect x="868.4" y="811.8" width="8.2" height="8.2" fill="#b89e78" opacity=".6"/><rect x="827.4" y="779.0" width="8.2" height="8.2" fill="#c0a47e" opacity=".6"/><rect x="860.2" y="811.8" width="8.2" height="8.2" fill="#9c8460" opacity=".6"/><rect x="868.4" y="721.6" width="8.2" height="8.2" fill="#8a6e50" opacity=".6"/><rect x="860.2" y="779.0" width="8.2" height="8.2" fill="#7c6446" opacity=".6"/><rect x="852.0" y="762.6" width="8.2" height="8.2" fill="#9c8460" opacity=".6"/><rect x="827.4" y="787.2" width="8.2" height="8.2" fill="#7c6446" opacity=".6"/><rect x="843.8" y="803.6" width="8.2" height="8.2" fill="#9c8460" opacity=".6"/><rect x="876.6" y="811.8" width="8.2" height="8.2" fill="#9c8460" opacity=".6"/><rect x="917.6" y="770.8" width="8.2" height="8.2" fill="#ae9470" opacity=".6"/><rect x="917.6" y="705.2" width="8.2" height="8.2" fill="#ae9470" opacity=".6"/><rect x="843.8" y="746.2" width="8.2" height="8.2" fill="#8a6e50" opacity=".6"/><rect x="934.0" y="803.6" width="8.2" height="8.2" fill="#7c6446" opacity=".6"/><rect x="868.4" y="705.2" width="8.2" height="8.2" fill="#c0a47e" opacity=".6"/><rect x="925.8" y="770.8" width="8.2" height="8.2" fill="#7c6446" opacity=".6"/><rect x="893.0" y="754.4" width="8.2" height="8.2" fill="#8a6e50" opacity=".6"/><rect x="884.8" y="721.6" width="8.2" height="8.2" fill="#b89e78" opacity=".6"/><rect x="819.2" y="705.2" width="8.2" height="8.2" fill="#c0a47e" opacity=".6"/><rect x="860.2" y="803.6" width="8.2" height="8.2" fill="#7c6446" opacity=".6"/><rect x="819.2" y="697.0" width="8.2" height="8.2" fill="#ae9470" opacity=".6"/><rect x="835.6" y="738.0" width="8.2" height="8.2" fill="#7c6446" opacity=".6"/><rect x="884.8" y="754.4" width="8.2" height="8.2" fill="#c0a47e" opacity=".6"/><rect x="811.0" y="803.6" width="8.2" height="8.2" fill="#8a6e50" opacity=".6"/><rect x="835.6" y="779.0" width="8.2" height="8.2" fill="#b89e78" opacity=".6"/><rect x="876.6" y="820.0" width="8.2" height="8.2" fill="#8a6e50" opacity=".6"/><rect x="901.2" y="754.4" width="8.2" height="8.2" fill="#b89e78" opacity=".6"/><rect x="835.6" y="721.6" width="8.2" height="8.2" fill="#b89e78" opacity=".6"/><rect x="868.4" y="762.6" width="8.2" height="8.2" fill="#b89e78" opacity=".6"/><rect x="811.0" y="820.0" width="8.2" height="8.2" fill="#c0a47e" opacity=".6"/><rect x="909.4" y="705.2" width="8.2" height="8.2" fill="#9c8460" opacity=".6"/><rect x="868.4" y="762.6" width="8.2" height="8.2" fill="#7c6446" opacity=".6"/><rect x="917.6" y="705.2" width="8.2" height="8.2" fill="#ae9470" opacity=".6"/><rect x="893.0" y="697.0" width="8.2" height="8.2" fill="#8a6e50" opacity=".6"/><rect x="843.8" y="705.2" width="8.2" height="8.2" fill="#8a6e50" opacity=".6"/><rect x="819.2" y="713.4" width="8.2" height="8.2" fill="#ae9470" opacity=".6"/><rect x="819.2" y="713.4" width="8.2" height="8.2" fill="#7c6446" opacity=".6"/><rect x="934.0" y="779.0" width="8.2" height="8.2" fill="#b89e78" opacity=".6"/><rect x="893.0" y="713.4" width="8.2" height="8.2" fill="#9c8460" opacity=".6"/><rect x="909.4" y="795.4" width="8.2" height="8.2" fill="#7c6446" opacity=".6"/><rect x="884.8" y="787.2" width="8.2" height="8.2" fill="#9c8460" opacity=".6"/><rect x="860.2" y="779.0" width="8.2" height="8.2" fill="#ae9470" opacity=".6"/><rect x="835.6" y="729.8" width="8.2" height="8.2" fill="#7c6446" opacity=".6"/><rect x="811.0" y="795.4" width="8.2" height="8.2" fill="#8a6e50" opacity=".6"/><rect x="852.0" y="705.2" width="8.2" height="8.2" fill="#9c8460" opacity=".6"/><rect x="925.8" y="795.4" width="8.2" height="8.2" fill="#c0a47e" opacity=".6"/><rect x="819.2" y="803.6" width="8.2" height="8.2" fill="#8a6e50" opacity=".6"/><rect x="901.2" y="820.0" width="8.2" height="8.2" fill="#c0a47e" opacity=".6"/><rect x="893.0" y="803.6" width="8.2" height="8.2" fill="#c0a47e" opacity=".6"/><rect x="917.6" y="811.8" width="8.2" height="8.2" fill="#8a6e50" opacity=".6"/><rect x="868.4" y="746.2" width="8.2" height="8.2" fill="#7c6446" opacity=".6"/><rect x="876.6" y="713.4" width="8.2" height="8.2" fill="#ae9470" opacity=".6"/><rect x="868.4" y="803.6" width="8.2" height="8.2" fill="#b89e78" opacity=".6"/><rect x="811.0" y="779.0" width="8.2" height="8.2" fill="#9c8460" opacity=".6"/><rect x="876.6" y="721.6" width="8.2" height="8.2" fill="#ae9470" opacity=".6"/><rect x="836.5" y="697" width="8" height="131.5" fill="#4e402e"/><rect x="868.6" y="697" width="8" height="131.5" fill="#4e402e"/><rect x="901.8" y="697" width="8" height="131.5" fill="#4e402e"/><rect x="934" y="697" width="8" height="131.5" fill="#4e402e"/><polygon points="822,678.5 830,678.5 844.5,697 836.5,697" fill="#4e402e"/><polygon points="851,678.5 859,678.5 876.6,697 868.6,697" fill="#4e402e"/><polygon points="881,678.5 889,678.5 909.8,697 901.8,697" fill="#4e402e"/><polygon points="910.5,678.5 918.5,678.5 942,697 934,697" fill="#4e402e"/><polygon points="798.5,700 811,712 811,717 798.5,705" fill="#3e3224"/><polygon points="798.5,730 811,742 811,747 798.5,735" fill="#3e3224"/><polygon points="798.5,760 811,772 811,777 798.5,765" fill="#3e3224"/><polygon points="798.5,790 811,802 811,807 798.5,795" fill="#3e3224"/>
<g clip-path="url(#gc)" opacity=".85">
<line x1="446.6" y1="635" x2="262.4" y2="760" stroke="#7a7a7a" stroke-width=".7" opacity=".68"/><line x1="452.4" y1="635" x2="272.9" y2="760" stroke="#7a7a7a" stroke-width=".7" opacity=".68"/><line x1="458.2" y1="635" x2="283.5" y2="760" stroke="#7a7a7a" stroke-width=".7" opacity=".68"/><line x1="464.0" y1="635" x2="294.0" y2="760" stroke="#7a7a7a" stroke-width=".7" opacity=".68"/><line x1="469.8" y1="635" x2="304.6" y2="760" stroke="#7a7a7a" stroke-width=".7" opacity=".68"/><line x1="475.6" y1="635" x2="315.1" y2="760" stroke="#7a7a7a" stroke-width=".7" opacity=".68"/><line x1="481.4" y1="635" x2="325.7" y2="760" stroke="#7a7a7a" stroke-width=".7" opacity=".68"/><line x1="487.2" y1="635" x2="336.2" y2="760" stroke="#7a7a7a" stroke-width=".7" opacity=".68"/><line x1="493.0" y1="635" x2="346.8" y2="760" stroke="#505050" stroke-width=".9" opacity=".75"/><line x1="498.8" y1="635" x2="357.3" y2="760" stroke="#7a7a7a" stroke-width=".7" opacity=".68"/><line x1="504.6" y1="635" x2="367.9" y2="760" stroke="#7a7a7a" stroke-width=".7" opacity=".68"/><line x1="510.4" y1="635" x2="378.4" y2="760" stroke="#7a7a7a" stroke-width=".7" opacity=".68"/><line x1="516.2" y1="635" x2="389.0" y2="760" stroke="#7a7a7a" stroke-width=".7" opacity=".68"/><line x1="522.1" y1="635" x2="399.5" y2="760" stroke="#7a7a7a" stroke-width=".7" opacity=".68"/><line x1="527.9" y1="635" x2="410.1" y2="760" stroke="#7a7a7a" stroke-width=".7" opacity=".68"/><line x1="533.7" y1="635" x2="420.6" y2="760" stroke="#7a7a7a" stroke-width=".7" opacity=".68"/><line x1="539.5" y1="635" x2="431.2" y2="760" stroke="#7a7a7a" stroke-width=".7" opacity=".68"/><line x1="545.3" y1="635" x2="441.8" y2="760" stroke="#7a7a7a" stroke-width=".7" opacity=".68"/><line x1="551.1" y1="635" x2="452.3" y2="760" stroke="#7a7a7a" stroke-width=".7" opacity=".68"/><line x1="556.9" y1="635" x2="462.8" y2="760" stroke="#7a7a7a" stroke-width=".7" opacity=".68"/><line x1="562.7" y1="635" x2="473.4" y2="760" stroke="#7a7a7a" stroke-width=".7" opacity=".68"/><line x1="568.5" y1="635" x2="483.9" y2="760" stroke="#7a7a7a" stroke-width=".7" opacity=".68"/><line x1="574.3" y1="635" x2="494.5" y2="760" stroke="#7a7a7a" stroke-width=".7" opacity=".68"/><line x1="580.1" y1="635" x2="505.0" y2="760" stroke="#7a7a7a" stroke-width=".7" opacity=".68"/><line x1="585.9" y1="635" x2="515.6" y2="760" stroke="#505050" stroke-width=".9" opacity=".75"/><line x1="591.7" y1="635" x2="526.1" y2="760" stroke="#7a7a7a" stroke-width=".7" opacity=".68"/><line x1="597.5" y1="635" x2="536.7" y2="760" stroke="#7a7a7a" stroke-width=".7" opacity=".68"/><line x1="603.3" y1="635" x2="547.2" y2="760" stroke="#7a7a7a" stroke-width=".7" opacity=".68"/><line x1="609.1" y1="635" x2="557.8" y2="760" stroke="#7a7a7a" stroke-width=".7" opacity=".68"/><line x1="615.0" y1="635" x2="568.3" y2="760" stroke="#7a7a7a" stroke-width=".7" opacity=".68"/><line x1="620.8" y1="635" x2="578.9" y2="760" stroke="#7a7a7a" stroke-width=".7" opacity=".68"/><line x1="626.6" y1="635" x2="589.4" y2="760" stroke="#7a7a7a" stroke-width=".7" opacity=".68"/><line x1="632.4" y1="635" x2="600.0" y2="760" stroke="#7a7a7a" stroke-width=".7" opacity=".68"/><line x1="638.2" y1="635" x2="610.5" y2="760" stroke="#7a7a7a" stroke-width=".7" opacity=".68"/><line x1="644.0" y1="635" x2="621.1" y2="760" stroke="#7a7a7a" stroke-width=".7" opacity=".68"/><line x1="649.8" y1="635" x2="631.6" y2="760" stroke="#7a7a7a" stroke-width=".7" opacity=".68"/><line x1="655.6" y1="635" x2="642.2" y2="760" stroke="#7a7a7a" stroke-width=".7" opacity=".68"/><line x1="661.4" y1="635" x2="652.8" y2="760" stroke="#7a7a7a" stroke-width=".7" opacity=".68"/><line x1="667.2" y1="635" x2="663.3" y2="760" stroke="#7a7a7a" stroke-width=".7" opacity=".68"/><line x1="673.0" y1="635" x2="673.9" y2="760" stroke="#7a7a7a" stroke-width=".7" opacity=".68"/><line x1="678.8" y1="635" x2="684.4" y2="760" stroke="#505050" stroke-width=".9" opacity=".75"/><line x1="684.6" y1="635" x2="694.9" y2="760" stroke="#7a7a7a" stroke-width=".7" opacity=".68"/><line x1="690.4" y1="635" x2="705.5" y2="760" stroke="#7a7a7a" stroke-width=".7" opacity=".68"/><line x1="696.2" y1="635" x2="716.0" y2="760" stroke="#7a7a7a" stroke-width=".7" opacity=".68"/><line x1="702.0" y1="635" x2="726.6" y2="760" stroke="#7a7a7a" stroke-width=".7" opacity=".68"/><line x1="707.9" y1="635" x2="737.1" y2="760" stroke="#7a7a7a" stroke-width=".7" opacity=".68"/><line x1="713.7" y1="635" x2="747.7" y2="760" stroke="#7a7a7a" stroke-width=".7" opacity=".68"/><line x1="719.5" y1="635" x2="758.2" y2="760" stroke="#7a7a7a" stroke-width=".7" opacity=".68"/><line x1="725.3" y1="635" x2="768.8" y2="760" stroke="#7a7a7a" stroke-width=".7" opacity=".68"/><line x1="731.1" y1="635" x2="779.4" y2="760" stroke="#7a7a7a" stroke-width=".7" opacity=".68"/><line x1="736.9" y1="635" x2="789.9" y2="760" stroke="#7a7a7a" stroke-width=".7" opacity=".68"/><line x1="742.7" y1="635" x2="800.5" y2="760" stroke="#7a7a7a" stroke-width=".7" opacity=".68"/><line x1="748.5" y1="635" x2="811.0" y2="760" stroke="#7a7a7a" stroke-width=".7" opacity=".68"/><line x1="754.3" y1="635" x2="821.5" y2="760" stroke="#7a7a7a" stroke-width=".7" opacity=".68"/><line x1="760.1" y1="635" x2="832.1" y2="760" stroke="#7a7a7a" stroke-width=".7" opacity=".68"/><line x1="765.9" y1="635" x2="842.6" y2="760" stroke="#7a7a7a" stroke-width=".7" opacity=".68"/><line x1="771.7" y1="635" x2="853.2" y2="760" stroke="#505050" stroke-width=".9" opacity=".75"/><line x1="777.5" y1="635" x2="863.8" y2="760" stroke="#7a7a7a" stroke-width=".7" opacity=".68"/><line x1="783.3" y1="635" x2="874.3" y2="760" stroke="#7a7a7a" stroke-width=".7" opacity=".68"/><line x1="789.1" y1="635" x2="884.9" y2="760" stroke="#7a7a7a" stroke-width=".7" opacity=".68"/><line x1="795.0" y1="635" x2="895.4" y2="760" stroke="#7a7a7a" stroke-width=".7" opacity=".68"/><line x1="800.8" y1="635" x2="906.0" y2="760" stroke="#7a7a7a" stroke-width=".7" opacity=".68"/><line x1="806.6" y1="635" x2="916.5" y2="760" stroke="#7a7a7a" stroke-width=".7" opacity=".68"/><line x1="812.4" y1="635" x2="927.0" y2="760" stroke="#7a7a7a" stroke-width=".7" opacity=".68"/><line x1="818.2" y1="635" x2="937.6" y2="760" stroke="#7a7a7a" stroke-width=".7" opacity=".68"/><line x1="824.0" y1="635" x2="948.1" y2="760" stroke="#7a7a7a" stroke-width=".7" opacity=".68"/><line x1="829.8" y1="635" x2="958.7" y2="760" stroke="#7a7a7a" stroke-width=".7" opacity=".68"/><line x1="835.6" y1="635" x2="969.2" y2="760" stroke="#7a7a7a" stroke-width=".7" opacity=".68"/><line x1="841.4" y1="635" x2="979.8" y2="760" stroke="#7a7a7a" stroke-width=".7" opacity=".68"/><line x1="847.2" y1="635" x2="990.4" y2="760" stroke="#7a7a7a" stroke-width=".7" opacity=".68"/><line x1="853.0" y1="635" x2="1000.9" y2="760" stroke="#7a7a7a" stroke-width=".7" opacity=".68"/><line x1="858.8" y1="635" x2="1011.5" y2="760" stroke="#7a7a7a" stroke-width=".7" opacity=".68"/><line x1="864.6" y1="635" x2="1022.0" y2="760" stroke="#505050" stroke-width=".9" opacity=".75"/><line x1="870.4" y1="635" x2="1032.5" y2="760" stroke="#7a7a7a" stroke-width=".7" opacity=".68"/><line x1="876.2" y1="635" x2="1043.1" y2="760" stroke="#7a7a7a" stroke-width=".7" opacity=".68"/><line x1="882.0" y1="635" x2="1053.7" y2="760" stroke="#7a7a7a" stroke-width=".7" opacity=".68"/><line x1="887.9" y1="635" x2="1064.2" y2="760" stroke="#7a7a7a" stroke-width=".7" opacity=".68"/><line x1="893.7" y1="635" x2="1074.8" y2="760" stroke="#7a7a7a" stroke-width=".7" opacity=".68"/><line x1="899.5" y1="635" x2="1085.3" y2="760" stroke="#7a7a7a" stroke-width=".7" opacity=".68"/><line x1="905.3" y1="635" x2="1095.8" y2="760" stroke="#7a7a7a" stroke-width=".7" opacity=".68"/><line x1="911.1" y1="635" x2="1106.4" y2="760" stroke="#7a7a7a" stroke-width=".7" opacity=".68"/><line x1="916.9" y1="635" x2="1117.0" y2="760" stroke="#7a7a7a" stroke-width=".7" opacity=".68"/><line x1="922.7" y1="635" x2="1127.5" y2="760" stroke="#7a7a7a" stroke-width=".7" opacity=".68"/><line x1="928.5" y1="635" x2="1138.0" y2="760" stroke="#7a7a7a" stroke-width=".7" opacity=".68"/><line x1="934.3" y1="635" x2="1148.6" y2="760" stroke="#7a7a7a" stroke-width=".7" opacity=".68"/><line x1="940.1" y1="635" x2="1159.2" y2="760" stroke="#7a7a7a" stroke-width=".7" opacity=".68"/><line x1="945.9" y1="635" x2="1169.7" y2="760" stroke="#7a7a7a" stroke-width=".7" opacity=".68"/><line x1="951.7" y1="635" x2="1180.2" y2="760" stroke="#7a7a7a" stroke-width=".7" opacity=".68"/><line x1="957.5" y1="635" x2="1190.8" y2="760" stroke="#505050" stroke-width=".9" opacity=".75"/><line x1="963.3" y1="635" x2="1201.3" y2="760" stroke="#7a7a7a" stroke-width=".7" opacity=".68"/><line x1="969.1" y1="635" x2="1211.9" y2="760" stroke="#7a7a7a" stroke-width=".7" opacity=".68"/><line x1="974.9" y1="635" x2="1222.5" y2="760" stroke="#7a7a7a" stroke-width=".7" opacity=".68"/><line x1="980.8" y1="635" x2="1233.0" y2="760" stroke="#7a7a7a" stroke-width=".7" opacity=".68"/><line x1="986.6" y1="635" x2="1243.6" y2="760" stroke="#7a7a7a" stroke-width=".7" opacity=".68"/><line x1="992.4" y1="635" x2="1254.1" y2="760" stroke="#7a7a7a" stroke-width=".7" opacity=".68"/><line x1="998.2" y1="635" x2="1264.7" y2="760" stroke="#7a7a7a" stroke-width=".7" opacity=".68"/><line x1="1004.0" y1="635" x2="1275.2" y2="760" stroke="#7a7a7a" stroke-width=".7" opacity=".68"/><line x1="1009.8" y1="635" x2="1285.8" y2="760" stroke="#7a7a7a" stroke-width=".7" opacity=".68"/><line x1="1015.6" y1="635" x2="1296.3" y2="760" stroke="#7a7a7a" stroke-width=".7" opacity=".68"/><line x1="1021.4" y1="635" x2="1306.8" y2="760" stroke="#7a7a7a" stroke-width=".7" opacity=".68"/><line x1="300" y1="760.0" x2="1194" y2="760.0" stroke="#444" stroke-width=".7" opacity=".62"/><line x1="300" y1="753.5" x2="1194" y2="753.5" stroke="#707070" stroke-width=".7" opacity=".62"/><line x1="300" y1="747.3" x2="1194" y2="747.3" stroke="#707070" stroke-width=".7" opacity=".62"/><line x1="300" y1="741.3" x2="1194" y2="741.3" stroke="#707070" stroke-width=".7" opacity=".62"/><line x1="300" y1="735.6" x2="1194" y2="735.6" stroke="#707070" stroke-width=".7" opacity=".62"/><line x1="300" y1="730.2" x2="1194" y2="730.2" stroke="#707070" stroke-width=".7" opacity=".62"/><line x1="300" y1="725.0" x2="1194" y2="725.0" stroke="#707070" stroke-width=".7" opacity=".62"/><line x1="300" y1="720.0" x2="1194" y2="720.0" stroke="#707070" stroke-width=".7" opacity=".62"/><line x1="300" y1="715.2" x2="1194" y2="715.2" stroke="#707070" stroke-width=".7" opacity=".62"/><line x1="300" y1="710.6" x2="1194" y2="710.6" stroke="#707070" stroke-width=".7" opacity=".62"/><line x1="300" y1="706.1" x2="1194" y2="706.1" stroke="#707070" stroke-width=".7" opacity=".62"/><line x1="300" y1="701.9" x2="1194" y2="701.9" stroke="#707070" stroke-width=".7" opacity=".62"/><line x1="300" y1="697.8" x2="1194" y2="697.8" stroke="#707070" stroke-width=".7" opacity=".62"/><line x1="300" y1="693.8" x2="1194" y2="693.8" stroke="#707070" stroke-width=".7" opacity=".62"/><line x1="300" y1="690.0" x2="1194" y2="690.0" stroke="#707070" stroke-width=".7" opacity=".62"/><line x1="300" y1="686.3" x2="1194" y2="686.3" stroke="#707070" stroke-width=".7" opacity=".62"/><line x1="300" y1="682.8" x2="1194" y2="682.8" stroke="#444" stroke-width=".7" opacity=".62"/><line x1="300" y1="679.4" x2="1194" y2="679.4" stroke="#707070" stroke-width=".7" opacity=".62"/><line x1="300" y1="676.1" x2="1194" y2="676.1" stroke="#707070" stroke-width=".7" opacity=".62"/><line x1="300" y1="672.9" x2="1194" y2="672.9" stroke="#707070" stroke-width=".7" opacity=".62"/><line x1="300" y1="669.8" x2="1194" y2="669.8" stroke="#707070" stroke-width=".7" opacity=".62"/><line x1="300" y1="666.8" x2="1194" y2="666.8" stroke="#707070" stroke-width=".7" opacity=".62"/><line x1="300" y1="663.9" x2="1194" y2="663.9" stroke="#707070" stroke-width=".7" opacity=".62"/><line x1="300" y1="661.0" x2="1194" y2="661.0" stroke="#707070" stroke-width=".7" opacity=".62"/><line x1="300" y1="658.3" x2="1194" y2="658.3" stroke="#707070" stroke-width=".7" opacity=".62"/><line x1="300" y1="655.7" x2="1194" y2="655.7" stroke="#707070" stroke-width=".7" opacity=".62"/><line x1="300" y1="653.1" x2="1194" y2="653.1" stroke="#707070" stroke-width=".7" opacity=".62"/><line x1="300" y1="650.6" x2="1194" y2="650.6" stroke="#707070" stroke-width=".7" opacity=".62"/><line x1="300" y1="648.2" x2="1194" y2="648.2" stroke="#707070" stroke-width=".7" opacity=".62"/><line x1="300" y1="645.8" x2="1194" y2="645.8" stroke="#707070" stroke-width=".7" opacity=".62"/><line x1="300" y1="643.5" x2="1194" y2="643.5" stroke="#707070" stroke-width=".7" opacity=".62"/><line x1="300" y1="641.3" x2="1194" y2="641.3" stroke="#707070" stroke-width=".7" opacity=".62"/><line x1="300" y1="639.2" x2="1194" y2="639.2" stroke="#444" stroke-width=".7" opacity=".62"/><line x1="300" y1="637.1" x2="1194" y2="637.1" stroke="#707070" stroke-width=".7" opacity=".62"/><line x1="300" y1="635.0" x2="1194" y2="635.0" stroke="#707070" stroke-width=".7" opacity=".62"/>
<rect x="608" y="657" width="35" height="1.2" fill="#888" opacity=".35"/><rect x="392" y="702" width="26" height="1.2" fill="#888" opacity=".35"/><rect x="380" y="698" width="16" height="1.2" fill="#888" opacity=".35"/><rect x="703" y="648" width="18" height="1.2" fill="#888" opacity=".35"/><rect x="695" y="735" width="19" height="1.2" fill="#888" opacity=".35"/><rect x="522" y="712" width="43" height="1.2" fill="#888" opacity=".35"/><rect x="826" y="686" width="44" height="1.2" fill="#888" opacity=".35"/><rect x="370" y="739" width="24" height="1.2" fill="#888" opacity=".35"/><rect x="454" y="654" width="24" height="1.2" fill="#888" opacity=".35"/><rect x="1032" y="661" width="32" height="1.2" fill="#888" opacity=".35"/><rect x="879" y="683" width="31" height="1.2" fill="#888" opacity=".35"/><rect x="384" y="647" width="21" height="1.2" fill="#888" opacity=".35"/><rect x="915" y="689" width="24" height="1.2" fill="#888" opacity=".35"/><rect x="834" y="692" width="24" height="1.2" fill="#888" opacity=".35"/><rect x="1013" y="720" width="22" height="1.2" fill="#888" opacity=".35"/><rect x="824" y="700" width="41" height="1.2" fill="#888" opacity=".35"/><rect x="957" y="673" width="44" height="1.2" fill="#888" opacity=".35"/><rect x="432" y="688" width="38" height="1.2" fill="#888" opacity=".35"/><rect x="461" y="696" width="16" height="1.2" fill="#888" opacity=".35"/><rect x="905" y="728" width="32" height="1.2" fill="#888" opacity=".35"/><rect x="1083" y="676" width="36" height="1.2" fill="#888" opacity=".35"/><rect x="841" y="707" width="29" height="1.2" fill="#888" opacity=".35"/><rect x="1052" y="749" width="29" height="1.2" fill="#888" opacity=".35"/><rect x="901" y="647" width="36" height="1.2" fill="#888" opacity=".35"/><rect x="887" y="754" width="40" height="1.2" fill="#888" opacity=".35"/><rect x="575" y="684" width="35" height="1.2" fill="#888" opacity=".35"/><rect x="349" y="693" width="20" height="1.2" fill="#888" opacity=".35"/><rect x="431" y="647" width="38" height="1.2" fill="#888" opacity=".35"/><rect x="441" y="668" width="27" height="1.2" fill="#888" opacity=".35"/><rect x="1079" y="649" width="28" height="1.2" fill="#888" opacity=".35"/><rect x="803" y="742" width="40" height="1.2" fill="#888" opacity=".35"/><rect x="1073" y="672" width="27" height="1.2" fill="#888" opacity=".35"/><rect x="639" y="742" width="44" height="1.2" fill="#888" opacity=".35"/><rect x="460" y="660" width="22" height="1.2" fill="#888" opacity=".35"/><rect x="531" y="696" width="33" height="1.2" fill="#888" opacity=".35"/><rect x="556" y="640" width="28" height="1.2" fill="#888" opacity=".35"/><rect x="648" y="705" width="44" height="1.2" fill="#888" opacity=".35"/><rect x="924" y="699" width="34" height="1.2" fill="#888" opacity=".35"/><rect x="912" y="646" width="42" height="1.2" fill="#888" opacity=".35"/><rect x="1001" y="741" width="39" height="1.2" fill="#888" opacity=".35"/><rect x="667" y="686" width="18" height="1.2" fill="#888" opacity=".35"/><rect x="875" y="647" width="17" height="1.2" fill="#888" opacity=".35"/><rect x="510" y="659" width="25" height="1.2" fill="#888" opacity=".35"/><rect x="375" y="640" width="20" height="1.2" fill="#888" opacity=".35"/><rect x="417" y="682" width="16" height="1.2" fill="#888" opacity=".35"/><rect x="1082" y="711" width="19" height="1.2" fill="#888" opacity=".35"/><rect x="547" y="680" width="26" height="1.2" fill="#888" opacity=".35"/><rect x="436" y="738" width="45" height="1.2" fill="#888" opacity=".35"/><rect x="731" y="696" width="18" height="1.2" fill="#888" opacity=".35"/><rect x="418" y="679" width="23" height="1.2" fill="#888" opacity=".35"/><rect x="1043" y="659" width="16" height="1.2" fill="#888" opacity=".35"/><rect x="1148" y="701" width="19" height="1.2" fill="#888" opacity=".35"/><rect x="797" y="643" width="31" height="1.2" fill="#888" opacity=".35"/><rect x="1172" y="739" width="36" height="1.2" fill="#888" opacity=".35"/><rect x="555" y="682" width="20" height="1.2" fill="#888" opacity=".35"/><rect x="994" y="701" width="38" height="1.2" fill="#888" opacity=".35"/><rect x="614" y="666" width="39" height="1.2" fill="#888" opacity=".35"/><rect x="1177" y="738" width="39" height="1.2" fill="#888" opacity=".35"/><rect x="1034" y="725" width="22" height="1.2" fill="#888" opacity=".35"/><rect x="775" y="681" width="16" height="1.2" fill="#888" opacity=".35"/><rect x="354" y="672" width="23" height="1.2" fill="#888" opacity=".35"/><rect x="926" y="750" width="28" height="1.2" fill="#888" opacity=".35"/><rect x="1136" y="754" width="44" height="1.2" fill="#888" opacity=".35"/><rect x="644" y="665" width="22" height="1.2" fill="#888" opacity=".35"/><rect x="499" y="664" width="34" height="1.2" fill="#888" opacity=".35"/><rect x="1104" y="737" width="29" height="1.2" fill="#888" opacity=".35"/><rect x="892" y="732" width="18" height="1.2" fill="#888" opacity=".35"/><rect x="898" y="745" width="38" height="1.2" fill="#888" opacity=".35"/><rect x="975" y="695" width="20" height="1.2" fill="#888" opacity=".35"/><rect x="1009" y="678" width="39" height="1.2" fill="#888" opacity=".35"/><rect x="1166" y="686" width="27" height="1.2" fill="#888" opacity=".35"/><rect x="1144" y="723" width="20" height="1.2" fill="#888" opacity=".35"/><rect x="439" y="657" width="42" height="1.2" fill="#888" opacity=".35"/><rect x="1024" y="657" width="40" height="1.2" fill="#888" opacity=".35"/><rect x="1173" y="716" width="26" height="1.2" fill="#888" opacity=".35"/><rect x="802" y="655" width="15" height="1.2" fill="#888" opacity=".35"/><rect x="1165" y="715" width="31" height="1.2" fill="#888" opacity=".35"/><rect x="1133" y="690" width="41" height="1.2" fill="#888" opacity=".35"/><rect x="1040" y="664" width="23" height="1.2" fill="#888" opacity=".35"/><rect x="582" y="668" width="33" height="1.2" fill="#888" opacity=".35"/><rect x="553" y="688" width="19" height="1.2" fill="#888" opacity=".35"/><rect x="1113" y="681" width="29" height="1.2" fill="#888" opacity=".35"/><rect x="832" y="744" width="28" height="1.2" fill="#888" opacity=".35"/><rect x="1119" y="698" width="31" height="1.2" fill="#888" opacity=".35"/><rect x="780" y="642" width="28" height="1.2" fill="#888" opacity=".35"/><rect x="487" y="640" width="39" height="1.2" fill="#888" opacity=".35"/><rect x="478" y="694" width="37" height="1.2" fill="#888" opacity=".35"/><rect x="809" y="677" width="31" height="1.2" fill="#888" opacity=".35"/><rect x="808" y="730" width="18" height="1.2" fill="#888" opacity=".35"/><rect x="812" y="669" width="23" height="1.2" fill="#888" opacity=".35"/>
</g>
<g opacity=".72"><polygon points="798.5,678.5 914.5,678.5 942,697 811,697" fill="#9a8262"/><polygon points="798.5,678.5 811,697 811,828.5 798.5,796" fill="#8a7254"/><rect x="811" y="697" width="131" height="131.5" fill="#a68c68"/><rect x="868.4" y="729.8" width="8.2" height="8.2" fill="#9c8460" opacity=".6"/><rect x="934.0" y="713.4" width="8.2" height="8.2" fill="#7c6446" opacity=".6"/><rect x="811.0" y="820.0" width="8.2" height="8.2" fill="#9c8460" opacity=".6"/><rect x="868.4" y="746.2" width="8.2" height="8.2" fill="#c0a47e" opacity=".6"/><rect x="934.0" y="820.0" width="8.2" height="8.2" fill="#ae9470" opacity=".6"/><rect x="843.8" y="754.4" width="8.2" height="8.2" fill="#c0a47e" opacity=".6"/><rect x="843.8" y="795.4" width="8.2" height="8.2" fill="#c0a47e" opacity=".6"/><rect x="811.0" y="713.4" width="8.2" height="8.2" fill="#b89e78" opacity=".6"/><rect x="819.2" y="770.8" width="8.2" height="8.2" fill="#8a6e50" opacity=".6"/><rect x="876.6" y="820.0" width="8.2" height="8.2" fill="#7c6446" opacity=".6"/><rect x="909.4" y="803.6" width="8.2" height="8.2" fill="#ae9470" opacity=".6"/><rect x="925.8" y="729.8" width="8.2" height="8.2" fill="#9c8460" opacity=".6"/><rect x="835.6" y="705.2" width="8.2" height="8.2" fill="#b89e78" opacity=".6"/><rect x="934.0" y="746.2" width="8.2" height="8.2" fill="#9c8460" opacity=".6"/><rect x="917.6" y="770.8" width="8.2" height="8.2" fill="#ae9470" opacity=".6"/><rect x="909.4" y="787.2" width="8.2" height="8.2" fill="#7c6446" opacity=".6"/><rect x="917.6" y="754.4" width="8.2" height="8.2" fill="#9c8460" opacity=".6"/><rect x="811.0" y="762.6" width="8.2" height="8.2" fill="#7c6446" opacity=".6"/><rect x="852.0" y="779.0" width="8.2" height="8.2" fill="#7c6446" opacity=".6"/><rect x="835.6" y="746.2" width="8.2" height="8.2" fill="#c0a47e" opacity=".6"/><rect x="876.6" y="770.8" width="8.2" height="8.2" fill="#8a6e50" opacity=".6"/><rect x="827.4" y="820.0" width="8.2" height="8.2" fill="#c0a47e" opacity=".6"/><rect x="934.0" y="713.4" width="8.2" height="8.2" fill="#9c8460" opacity=".6"/><rect x="827.4" y="803.6" width="8.2" height="8.2" fill="#b89e78" opacity=".6"/><rect x="811.0" y="770.8" width="8.2" height="8.2" fill="#ae9470" opacity=".6"/><rect x="917.6" y="721.6" width="8.2" height="8.2" fill="#8a6e50" opacity=".6"/><rect x="819.2" y="795.4" width="8.2" height="8.2" fill="#c0a47e" opacity=".6"/><rect x="893.0" y="762.6" width="8.2" height="8.2" fill="#7c6446" opacity=".6"/><rect x="868.4" y="705.2" width="8.2" height="8.2" fill="#9c8460" opacity=".6"/><rect x="811.0" y="713.4" width="8.2" height="8.2" fill="#8a6e50" opacity=".6"/><rect x="819.2" y="746.2" width="8.2" height="8.2" fill="#ae9470" opacity=".6"/><rect x="884.8" y="762.6" width="8.2" height="8.2" fill="#b89e78" opacity=".6"/><rect x="819.2" y="779.0" width="8.2" height="8.2" fill="#9c8460" opacity=".6"/><rect x="901.2" y="729.8" width="8.2" height="8.2" fill="#ae9470" opacity=".6"/><rect x="909.4" y="811.8" width="8.2" height="8.2" fill="#7c6446" opacity=".6"/><rect x="909.4" y="721.6" width="8.2" height="8.2" fill="#7c6446" opacity=".6"/><rect x="876.6" y="803.6" width="8.2" height="8.2" fill="#c0a47e" opacity=".6"/><rect x="868.4" y="770.8" width="8.2" height="8.2" fill="#ae9470" opacity=".6"/><rect x="876.6" y="770.8" width="8.2" height="8.2" fill="#7c6446" opacity=".6"/><rect x="893.0" y="697.0" width="8.2" height="8.2" fill="#ae9470" opacity=".6"/><rect x="893.0" y="697.0" width="8.2" height="8.2" fill="#ae9470" opacity=".6"/><rect x="843.8" y="705.2" width="8.2" height="8.2" fill="#c0a47e" opacity=".6"/><rect x="893.0" y="811.8" width="8.2" height="8.2" fill="#9c8460" opacity=".6"/><rect x="901.2" y="762.6" width="8.2" height="8.2" fill="#c0a47e" opacity=".6"/><rect x="934.0" y="697.0" width="8.2" height="8.2" fill="#7c6446" opacity=".6"/><rect x="819.2" y="697.0" width="8.2" height="8.2" fill="#9c8460" opacity=".6"/><rect x="876.6" y="811.8" width="8.2" height="8.2" fill="#9c8460" opacity=".6"/><rect x="893.0" y="738.0" width="8.2" height="8.2" fill="#9c8460" opacity=".6"/><rect x="852.0" y="779.0" width="8.2" height="8.2" fill="#9c8460" opacity=".6"/><rect x="876.6" y="770.8" width="8.2" height="8.2" fill="#ae9470" opacity=".6"/><rect x="835.6" y="697.0" width="8.2" height="8.2" fill="#7c6446" opacity=".6"/><rect x="843.8" y="770.8" width="8.2" height="8.2" fill="#7c6446" opacity=".6"/><rect x="868.4" y="762.6" width="8.2" height="8.2" fill="#b89e78" opacity=".6"/><rect x="893.0" y="738.0" width="8.2" height="8.2" fill="#c0a47e" opacity=".6"/><rect x="917.6" y="721.6" width="8.2" height="8.2" fill="#8a6e50" opacity=".6"/><rect x="893.0" y="779.0" width="8.2" height="8.2" fill="#c0a47e" opacity=".6"/><rect x="868.4" y="811.8" width="8.2" height="8.2" fill="#b89e78" opacity=".6"/><rect x="827.4" y="779.0" width="8.2" height="8.2" fill="#c0a47e" opacity=".6"/><rect x="860.2" y="811.8" width="8.2" height="8.2" fill="#9c8460" opacity=".6"/><rect x="868.4" y="721.6" width="8.2" height="8.2" fill="#8a6e50" opacity=".6"/><rect x="860.2" y="779.0" width="8.2" height="8.2" fill="#7c6446" opacity=".6"/><rect x="852.0" y="762.6" width="8.2" height="8.2" fill="#9c8460" opacity=".6"/><rect x="827.4" y="787.2" width="8.2" height="8.2" fill="#7c6446" opacity=".6"/><rect x="843.8" y="803.6" width="8.2" height="8.2" fill="#9c8460" opacity=".6"/><rect x="876.6" y="811.8" width="8.2" height="8.2" fill="#9c8460" opacity=".6"/><rect x="917.6" y="770.8" width="8.2" height="8.2" fill="#ae9470" opacity=".6"/><rect x="917.6" y="705.2" width="8.2" height="8.2" fill="#ae9470" opacity=".6"/><rect x="843.8" y="746.2" width="8.2" height="8.2" fill="#8a6e50" opacity=".6"/><rect x="934.0" y="803.6" width="8.2" height="8.2" fill="#7c6446" opacity=".6"/><rect x="868.4" y="705.2" width="8.2" height="8.2" fill="#c0a47e" opacity=".6"/><rect x="925.8" y="770.8" width="8.2" height="8.2" fill="#7c6446" opacity=".6"/><rect x="893.0" y="754.4" width="8.2" height="8.2" fill="#8a6e50" opacity=".6"/><rect x="884.8" y="721.6" width="8.2" height="8.2" fill="#b89e78" opacity=".6"/><rect x="819.2" y="705.2" width="8.2" height="8.2" fill="#c0a47e" opacity=".6"/><rect x="860.2" y="803.6" width="8.2" height="8.2" fill="#7c6446" opacity=".6"/><rect x="819.2" y="697.0" width="8.2" height="8.2" fill="#ae9470" opacity=".6"/><rect x="835.6" y="738.0" width="8.2" height="8.2" fill="#7c6446" opacity=".6"/><rect x="884.8" y="754.4" width="8.2" height="8.2" fill="#c0a47e" opacity=".6"/><rect x="811.0" y="803.6" width="8.2" height="8.2" fill="#8a6e50" opacity=".6"/><rect x="835.6" y="779.0" width="8.2" height="8.2" fill="#b89e78" opacity=".6"/><rect x="876.6" y="820.0" width="8.2" height="8.2" fill="#8a6e50" opacity=".6"/><rect x="901.2" y="754.4" width="8.2" height="8.2" fill="#b89e78" opacity=".6"/><rect x="835.6" y="721.6" width="8.2" height="8.2" fill="#b89e78" opacity=".6"/><rect x="868.4" y="762.6" width="8.2" height="8.2" fill="#b89e78" opacity=".6"/><rect x="811.0" y="820.0" width="8.2" height="8.2" fill="#c0a47e" opacity=".6"/><rect x="909.4" y="705.2" width="8.2" height="8.2" fill="#9c8460" opacity=".6"/><rect x="868.4" y="762.6" width="8.2" height="8.2" fill="#7c6446" opacity=".6"/><rect x="917.6" y="705.2" width="8.2" height="8.2" fill="#ae9470" opacity=".6"/><rect x="893.0" y="697.0" width="8.2" height="8.2" fill="#8a6e50" opacity=".6"/><rect x="843.8" y="705.2" width="8.2" height="8.2" fill="#8a6e50" opacity=".6"/><rect x="819.2" y="713.4" width="8.2" height="8.2" fill="#ae9470" opacity=".6"/><rect x="819.2" y="713.4" width="8.2" height="8.2" fill="#7c6446" opacity=".6"/><rect x="934.0" y="779.0" width="8.2" height="8.2" fill="#b89e78" opacity=".6"/><rect x="893.0" y="713.4" width="8.2" height="8.2" fill="#9c8460" opacity=".6"/><rect x="909.4" y="795.4" width="8.2" height="8.2" fill="#7c6446" opacity=".6"/><rect x="884.8" y="787.2" width="8.2" height="8.2" fill="#9c8460" opacity=".6"/><rect x="860.2" y="779.0" width="8.2" height="8.2" fill="#ae9470" opacity=".6"/><rect x="835.6" y="729.8" width="8.2" height="8.2" fill="#7c6446" opacity=".6"/><rect x="811.0" y="795.4" width="8.2" height="8.2" fill="#8a6e50" opacity=".6"/><rect x="852.0" y="705.2" width="8.2" height="8.2" fill="#9c8460" opacity=".6"/><rect x="925.8" y="795.4" width="8.2" height="8.2" fill="#c0a47e" opacity=".6"/><rect x="819.2" y="803.6" width="8.2" height="8.2" fill="#8a6e50" opacity=".6"/><rect x="901.2" y="820.0" width="8.2" height="8.2" fill="#c0a47e" opacity=".6"/><rect x="893.0" y="803.6" width="8.2" height="8.2" fill="#c0a47e" opacity=".6"/><rect x="917.6" y="811.8" width="8.2" height="8.2" fill="#8a6e50" opacity=".6"/><rect x="868.4" y="746.2" width="8.2" height="8.2" fill="#7c6446" opacity=".6"/><rect x="876.6" y="713.4" width="8.2" height="8.2" fill="#ae9470" opacity=".6"/><rect x="868.4" y="803.6" width="8.2" height="8.2" fill="#b89e78" opacity=".6"/><rect x="811.0" y="779.0" width="8.2" height="8.2" fill="#9c8460" opacity=".6"/><rect x="876.6" y="721.6" width="8.2" height="8.2" fill="#ae9470" opacity=".6"/><rect x="836.5" y="697" width="8" height="131.5" fill="#4e402e"/><rect x="868.6" y="697" width="8" height="131.5" fill="#4e402e"/><rect x="901.8" y="697" width="8" height="131.5" fill="#4e402e"/><rect x="934" y="697" width="8" height="131.5" fill="#4e402e"/><polygon points="822,678.5 830,678.5 844.5,697 836.5,697" fill="#4e402e"/><polygon points="851,678.5 859,678.5 876.6,697 868.6,697" fill="#4e402e"/><polygon points="881,678.5 889,678.5 909.8,697 901.8,697" fill="#4e402e"/><polygon points="910.5,678.5 918.5,678.5 942,697 934,697" fill="#4e402e"/><polygon points="798.5,700 811,712 811,717 798.5,705" fill="#3e3224"/><polygon points="798.5,730 811,742 811,747 798.5,735" fill="#3e3224"/><polygon points="798.5,760 811,772 811,777 798.5,765" fill="#3e3224"/><polygon points="798.5,790 811,802 811,807 798.5,795" fill="#3e3224"/></g>
<path d="M1124 876 Q1124 879.5 1152 879.5 Q1180 879.5 1180 876" fill="none" stroke="#b4b4b4" stroke-width="1.8"/>
<rect x="1142" y="850" width="26" height="26" fill="#7b7be6"/>
<text x="1155" y="870" font-family="Liberation Sans" font-size="17" fill="#eef" text-anchor="middle">R</text>
<polygon points="1173,836.5 1193,836.5 1193,885 1171,872 1171,838.5" fill="#5a5a5a" stroke="#262626" stroke-width="1"/>
<rect x="1175" y="840" width="16" height="19.5" rx="3" fill="#0f2c5c" transform="rotate(6 1183 850)"/>
<circle cx="1183" cy="850" r="5.5" fill="#7d8aa0"/>
<path d="M1179 850 L1181.5 847.5 L1181.5 849 L1184.5 849 L1184.5 847.5 L1187 850 L1184.5 852.5 L1184.5 851 L1181.5 851 L1181.5 852.5Z" fill="#0f2c5c"/>
</svg>
<svg style="position:absolute;left:382px;top:34px" width="53" height="5"><path d="M0.5 0 L52.5 0 L51 3 Q50.5 3.8 49.5 3.8 L3.5 3.8 Q2.5 3.8 2 3Z" fill="#e9c46c"/></svg>
<div style="left:201px;top:0;width:807px;height:35px;background:#f4f4f4;border-radius:0 0 4px 4px;box-shadow:0 1px 2px rgba(0,0,0,.35)"></div>
<svg style="position:absolute;left:925px;top:33px" width="82" height="23"><path d="M0 0.5 L3 1.5 L13 19.5 Q14.5 21.5 17 21.5 L66 21.5 Q68.5 21.5 69.5 19.5 L77 2 L82 0.5 Z" fill="#f4f4f4" stroke="#888" stroke-width=".7"/><rect x="0" y="0" width="82" height="2" fill="#f4f4f4"/></svg>
<svg style="position:absolute;left:219px;top:10px" width="14" height="14"><path d="M1.5 1.5 L12.5 12.5 M12.5 1.5 L1.5 12.5" stroke="#666" stroke-width="3"/></svg>
<div class="sep" style="left:247px"></div>
<svg style="position:absolute;left:264px;top:9px" width="11" height="16"><path d="M6 0 L1 9 L5 9 L3 16 L10 6 L6 6 L8 0Z" fill="#666"/></svg>
<div class="tb" style="left:283px;transform:scaleX(0.9540);transform-origin:0 0">Действия</div>
<div class="tri" style="left:344px"></div>
<div class="sep" style="left:365px"></div>
<svg style="position:absolute;left:381px;top:9px" width="14" height="14"><path d="M0 2 L6 1 L6 6.5 L0 6.5Z M7 0.8 L14 0 L14 6.5 L7 6.5Z M0 7.5 L6 7.5 L6 13 L0 12Z M7 7.5 L14 7.5 L14 14 L7 13.2Z" fill="#666"/></svg>
<div class="tri" style="left:401px"></div>
<div class="sep" style="left:422px"></div>
<svg style="position:absolute;left:436px;top:11px" width="17" height="11"><path d="M0.5 5.5 Q8.5 -3 16.5 5.5 Q8.5 14 0.5 5.5Z" fill="#666"/><circle cx="8.5" cy="5.5" r="3" fill="#f4f4f4"/><circle cx="8.5" cy="5.5" r="1.5" fill="#666"/></svg>
<div class="tb" style="left:459px;transform:scaleX(0.9314);transform-origin:0 0">Просмотр</div>
<div class="tri" style="left:520px"></div>
<div class="sep" style="left:541px"></div>
<svg style="position:absolute;left:555px;top:9px" width="18" height="16"><path d="M1 0 L11 0 Q12 0 12 1 L12 7 Q12 8 11 8 L5 8 L2 11 L2 8 L1 8 Q0 8 0 7 L0 1 Q0 0 1 0Z" fill="#666"/><path d="M13 4 L17 4 Q18 4 18 5 L18 11 Q18 12 17 12 L16 12 L16 15 L13 12 L7 12 Q6 12 6 11 L6 9 L11 9 Q13 9 13 7Z" fill="#666"/></svg>
<div class="tb" style="left:577px;transform:scaleX(0.9491);transform-origin:0 0">Аудио/Видео</div>
<div class="tri" style="left:659px"></div>
<div class="sep" style="left:679px"></div>
<svg style="position:absolute;left:695px;top:9px" width="14" height="16"><path d="M0 1 L9 1 L9 3 L2 3 L2 12 L0 12Z" fill="#666"/><rect x="4" y="4" width="10" height="12" rx="1" fill="#666"/><path d="M6 7 L12 7 M6 9.5 L12 9.5 M6 12 L10 12" stroke="#f4f4f4" stroke-width="1"/></svg>
<div class="tb" style="left:715px;transform:scaleX(0.9665);transform-origin:0 0">Передача файлов</div>
<div class="tri" style="left:830px"></div>
<div class="sep" style="left:850px"></div>
<svg style="position:absolute;left:864px;top:9px" width="18" height="16"><g transform="rotate(-28 9 8)" fill="#666"><rect x="5" y="4.5" width="8" height="7"/><circle cx="9" cy="3.5" r="2.3"/><circle cx="14" cy="8" r="2.3"/><circle cx="4" cy="8" r="2.3"/><circle cx="9" cy="12.5" r="2.3"/></g></svg>
<div class="tb" style="left:886px;transform:scaleX(0.9720);transform-origin:0 0">Дополнительно</div>
<div class="tri" style="left:985px"></div>
<svg style="position:absolute;left:950px;top:40px" width="12" height="11"><path d="M1 1 L5 1 L1 5Z M11 1 L7 1 L11 5Z M1 10 L5 10 L1 6Z M11 10 L7 10 L11 6Z" fill="#666"/><path d="M2 2 L4.5 4.5 M10 2 L7.5 4.5 M2 9 L4.5 6.5 M10 9 L7.5 6.5" stroke="#666" stroke-width="1.5"/></svg>
<div style="left:966px;top:38px;width:1px;height:11px;background:#ccc"></div>
<svg style="position:absolute;left:972px;top:40px" width="12" height="10"><path d="M0.5 7 L6 1.5 L11.5 7 L11.5 9.5 L6 5 L0.5 9.5Z" fill="#666"/></svg>

</body></html>
